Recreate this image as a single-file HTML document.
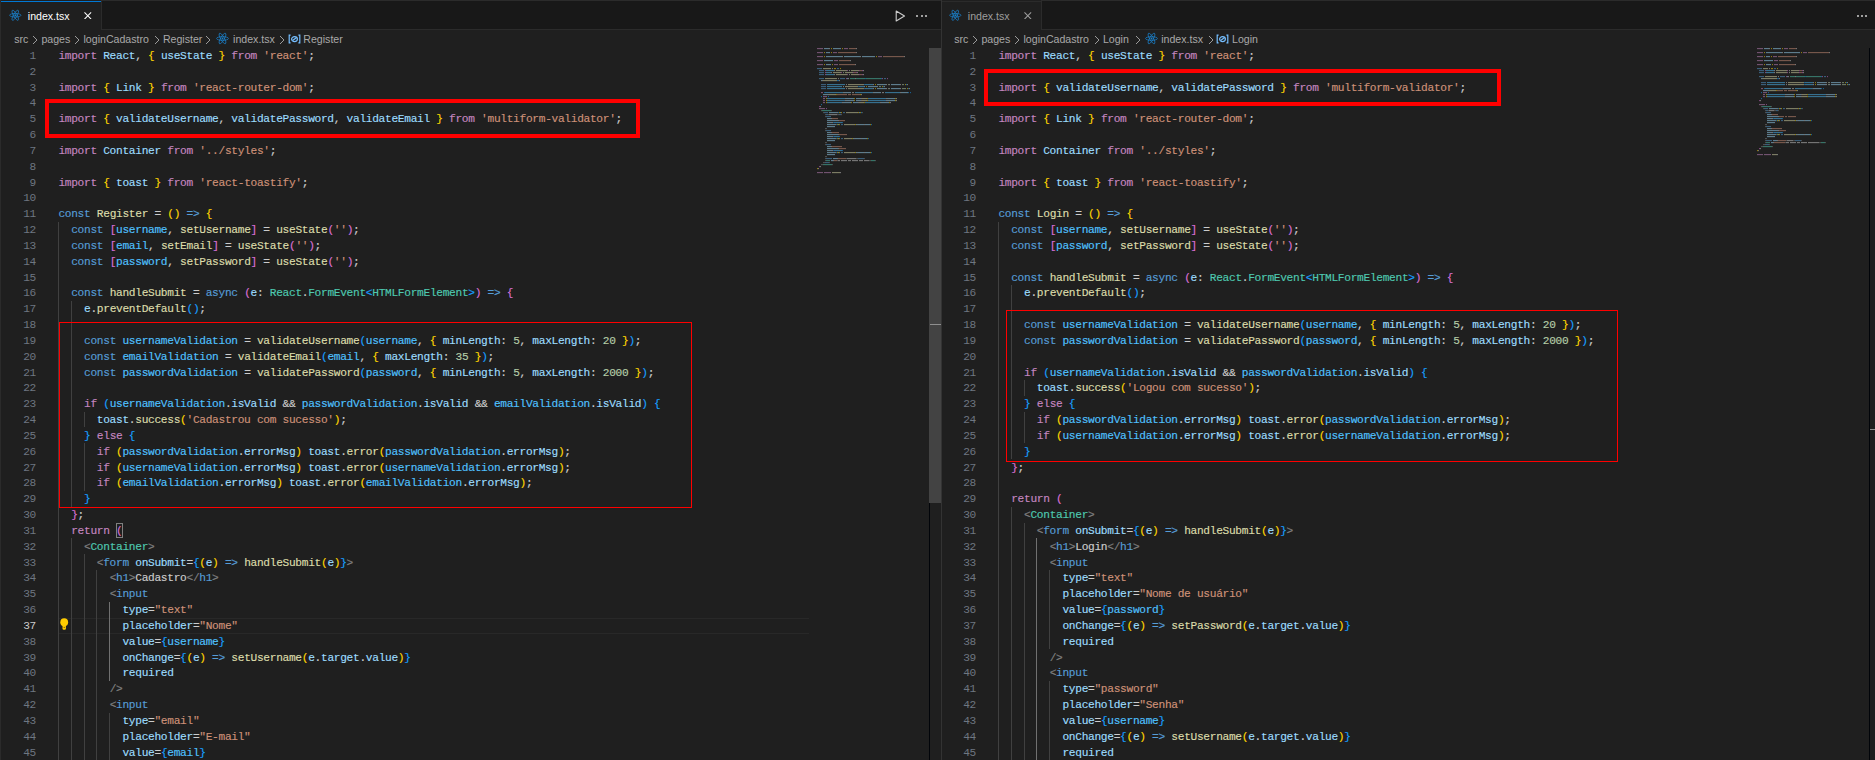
<!DOCTYPE html><html><head><meta charset="utf-8"><style>
*{margin:0;padding:0;box-sizing:border-box}
html,body{width:1875px;height:760px;overflow:hidden;background:#1f1f1f}
body{position:relative;font-family:"Liberation Sans",sans-serif}
.abs{position:absolute}
.tabs{position:absolute;top:0;height:30px;background:#181818;border-bottom:1px solid #2b2b2b}
.tab{position:absolute;top:0;height:30px;background:#1f1f1f;border-right:1px solid #2b2b2b}
.tabt{position:absolute;top:9.5px;font-size:10.6px;line-height:12px;white-space:pre}
.bc{position:absolute;top:33px;font-size:10.6px;line-height:12px;color:#a9a9a9;white-space:pre}
.chev{position:absolute;top:34.5px}
.ln{position:absolute;width:36px;text-align:right;font-family:"Liberation Mono",monospace;font-size:11.2px;letter-spacing:-0.31px;margin-top:1.4px;line-height:15.833px;height:15.833px;color:#6e7681}
.ln.act{color:#cccccc}
.cl{position:absolute;font-family:"Liberation Mono",monospace;font-size:11.2px;letter-spacing:-0.31px;line-height:15.833px;height:15.833px;color:#cccccc;white-space:pre;margin-top:1.4px;-webkit-text-stroke:0.15px currentColor}
.g{position:absolute;width:1px;background:#404040}
.g.ga{background:#707070}
.mm{position:absolute;opacity:0.62}
</style></head><body>
<div class="tabs" style="left:0;width:941px"></div>
<div class="tabs" style="left:942px;width:933px"></div>
<div class="abs" style="left:0;top:0;width:1875px;height:1px;background:#2b2b2b"></div>
<div class="abs" style="left:0;top:0;width:1px;height:760px;background:#2b2b2b"></div>
<div class="tab" style="left:1px;width:100.5px"></div>
<div class="abs" style="left:1px;top:1px;width:99.5px;height:1.2px;background:#0078d4"></div>
<svg width="12.5" height="12.5" viewBox="-12 -12 24 24" style="position:absolute;left:9.3px;top:9.3px"><g fill="none" stroke="#1a7fc9" stroke-width="1.4"><ellipse rx="11" ry="3.4"/><ellipse rx="11" ry="3.4" transform="rotate(60)"/><ellipse rx="11" ry="3.4" transform="rotate(120)"/></g><circle r="1.7" fill="#1a7fc9"/></svg>
<div class="tabt" style="left:27.8px;color:#ffffff">index.tsx</div>
<svg class="abs" style="left:84.3px;top:11.7px" width="7.6" height="7.6" viewBox="0 0 8 8"><path d="M.5.5l7 7M7.5.5l-7 7" stroke="#ffffff" stroke-width="1.1"/></svg>
<svg class="abs" style="left:895px;top:10px" width="11" height="12" viewBox="0 0 11 12"><path d="M1.2 1v10l8.3-5z" fill="none" stroke="#cccccc" stroke-width="1.1" stroke-linejoin="round"/></svg>
<div class="abs" style="left:916.4px;top:14.5px;width:2px;height:2px;background:#cccccc;border-radius:1px"></div>
<div class="abs" style="left:920.7px;top:14.5px;width:2px;height:2px;background:#cccccc;border-radius:1px"></div>
<div class="abs" style="left:924.8px;top:14.5px;width:2px;height:2px;background:#cccccc;border-radius:1px"></div>
<div class="tab" style="left:941px;width:100.5px"></div>
<div class="abs" style="left:942px;top:0.5px;width:98.5px;height:1.4px;background:#2b2b2b"></div>
<svg width="12.5" height="12.5" viewBox="-12 -12 24 24" style="position:absolute;left:949.3px;top:9.3px"><g fill="none" stroke="#1a7fc9" stroke-width="1.4"><ellipse rx="11" ry="3.4"/><ellipse rx="11" ry="3.4" transform="rotate(60)"/><ellipse rx="11" ry="3.4" transform="rotate(120)"/></g><circle r="1.7" fill="#1a7fc9"/></svg>
<div class="tabt" style="left:967.8px;color:#9d9d9d">index.tsx</div>
<svg class="abs" style="left:1024.3px;top:11.7px" width="7.6" height="7.6" viewBox="0 0 8 8"><path d="M.5.5l7 7M7.5.5l-7 7" stroke="#9d9d9d" stroke-width="1.1"/></svg>
<div class="abs" style="left:1856.8px;top:14.5px;width:2px;height:2px;background:#cccccc;border-radius:1px"></div>
<div class="abs" style="left:1860.8px;top:14.5px;width:2px;height:2px;background:#cccccc;border-radius:1px"></div>
<div class="abs" style="left:1864.9px;top:14.5px;width:2px;height:2px;background:#cccccc;border-radius:1px"></div>
<div class="abs" style="left:941px;top:0;width:1px;height:760px;background:#333333"></div>
<div class="bc" style="left:14.3px">src</div>
<svg class="chev" style="left:32.2px" width="6" height="10" viewBox="0 0 6 10"><path d="M1 1l4 4-4 4" fill="none" stroke="#a9a9a9" stroke-width="0.9"/></svg>
<div class="bc" style="left:41.4px">pages</div>
<svg class="chev" style="left:74.0px" width="6" height="10" viewBox="0 0 6 10"><path d="M1 1l4 4-4 4" fill="none" stroke="#a9a9a9" stroke-width="0.9"/></svg>
<div class="bc" style="left:83.5px">loginCadastro</div>
<svg class="chev" style="left:153.7px" width="6" height="10" viewBox="0 0 6 10"><path d="M1 1l4 4-4 4" fill="none" stroke="#a9a9a9" stroke-width="0.9"/></svg>
<div class="bc" style="left:162.9px">Register</div>
<svg class="chev" style="left:205.1px" width="6" height="10" viewBox="0 0 6 10"><path d="M1 1l4 4-4 4" fill="none" stroke="#a9a9a9" stroke-width="0.9"/></svg>
<svg width="13" height="13" viewBox="-12 -12 24 24" style="position:absolute;left:215.5px;top:32px"><g fill="none" stroke="#1a7fc9" stroke-width="1.4"><ellipse rx="11" ry="3.4"/><ellipse rx="11" ry="3.4" transform="rotate(60)"/><ellipse rx="11" ry="3.4" transform="rotate(120)"/></g><circle r="1.7" fill="#1a7fc9"/></svg>
<div class="bc" style="left:233.1px">index.tsx</div>
<svg class="chev" style="left:279.0px" width="6" height="10" viewBox="0 0 6 10"><path d="M1 1l4 4-4 4" fill="none" stroke="#a9a9a9" stroke-width="0.9"/></svg>
<svg width="13" height="10" viewBox="0 0 13 10" style="position:absolute;left:287.7px;top:34px"><g fill="none" stroke="#75beff" stroke-width="1.2"><path d="M2.6 1.2H1.2v7.6h1.4M10.4 1.2h1.4v7.6h-1.4"/><ellipse cx="6.5" cy="5.1" rx="2.9" ry="2.5"/><path d="M4.6 6.6L8.6 3.6"/></g></svg>
<div class="bc" style="left:303.3px">Register</div>
<div class="bc" style="left:954.3px">src</div>
<svg class="chev" style="left:972.2px" width="6" height="10" viewBox="0 0 6 10"><path d="M1 1l4 4-4 4" fill="none" stroke="#a9a9a9" stroke-width="0.9"/></svg>
<div class="bc" style="left:981.4px">pages</div>
<svg class="chev" style="left:1014.0px" width="6" height="10" viewBox="0 0 6 10"><path d="M1 1l4 4-4 4" fill="none" stroke="#a9a9a9" stroke-width="0.9"/></svg>
<div class="bc" style="left:1023.5px">loginCadastro</div>
<svg class="chev" style="left:1093.7px" width="6" height="10" viewBox="0 0 6 10"><path d="M1 1l4 4-4 4" fill="none" stroke="#a9a9a9" stroke-width="0.9"/></svg>
<div class="bc" style="left:1102.9px">Login</div>
<svg class="chev" style="left:1134.5px" width="6" height="10" viewBox="0 0 6 10"><path d="M1 1l4 4-4 4" fill="none" stroke="#a9a9a9" stroke-width="0.9"/></svg>
<svg width="13" height="13" viewBox="-12 -12 24 24" style="position:absolute;left:1144.6px;top:32px"><g fill="none" stroke="#1a7fc9" stroke-width="1.4"><ellipse rx="11" ry="3.4"/><ellipse rx="11" ry="3.4" transform="rotate(60)"/><ellipse rx="11" ry="3.4" transform="rotate(120)"/></g><circle r="1.7" fill="#1a7fc9"/></svg>
<div class="bc" style="left:1161.2px">index.tsx</div>
<svg class="chev" style="left:1207.5px" width="6" height="10" viewBox="0 0 6 10"><path d="M1 1l4 4-4 4" fill="none" stroke="#a9a9a9" stroke-width="0.9"/></svg>
<svg width="13" height="10" viewBox="0 0 13 10" style="position:absolute;left:1216.2px;top:34px"><g fill="none" stroke="#75beff" stroke-width="1.2"><path d="M2.6 1.2H1.2v7.6h1.4M10.4 1.2h1.4v7.6h-1.4"/><ellipse cx="6.5" cy="5.1" rx="2.9" ry="2.5"/><path d="M4.6 6.6L8.6 3.6"/></g></svg>
<div class="bc" style="left:1232.0px">Login</div>
<div class="abs" style="left:58px;top:617.50px;width:751px;height:16.8px;border-top:1px solid #282828;border-bottom:1px solid #282828"></div>
<div class="g" style="left:58px;top:221.67px;height:538.33px"></div>
<div class="g" style="left:71px;top:300.83px;height:205.83px"></div>
<div class="g" style="left:71px;top:538.33px;height:221.67px"></div>
<div class="g" style="left:84px;top:411.67px;height:15.83px"></div>
<div class="g" style="left:84px;top:443.33px;height:47.50px"></div>
<div class="g" style="left:84px;top:554.17px;height:205.83px"></div>
<div class="g" style="left:96px;top:570.00px;height:190.00px"></div>
<div class="g ga" style="left:109px;top:601.67px;height:79.17px"></div>
<div class="g" style="left:109px;top:712.50px;height:47.50px"></div>
<div class="ln" style="left:0px;top:47.50px">1</div>
<div class="cl" style="left:58.40px;top:47.50px"><span style="color:#c586c0">import</span> <span style="color:#9cdcfe">React</span><span style="color:#cccccc">,</span> <span style="color:#ffd700">{</span> <span style="color:#9cdcfe">useState</span> <span style="color:#ffd700">}</span> <span style="color:#c586c0">from</span> <span style="color:#ce9178">'react'</span><span style="color:#cccccc">;</span></div>
<div class="ln" style="left:0px;top:63.33px">2</div>
<div class="ln" style="left:0px;top:79.17px">3</div>
<div class="cl" style="left:58.40px;top:79.17px"><span style="color:#c586c0">import</span> <span style="color:#ffd700">{</span> <span style="color:#9cdcfe">Link</span> <span style="color:#ffd700">}</span> <span style="color:#c586c0">from</span> <span style="color:#ce9178">'react-router-dom'</span><span style="color:#cccccc">;</span></div>
<div class="ln" style="left:0px;top:95.00px">4</div>
<div class="ln" style="left:0px;top:110.83px">5</div>
<div class="cl" style="left:58.40px;top:110.83px"><span style="color:#c586c0">import</span> <span style="color:#ffd700">{</span> <span style="color:#9cdcfe">validateUsername</span><span style="color:#cccccc">,</span> <span style="color:#9cdcfe">validatePassword</span><span style="color:#cccccc">,</span> <span style="color:#9cdcfe">validateEmail</span> <span style="color:#ffd700">}</span> <span style="color:#c586c0">from</span> <span style="color:#ce9178">'multiform-validator'</span><span style="color:#cccccc">;</span></div>
<div class="ln" style="left:0px;top:126.67px">6</div>
<div class="ln" style="left:0px;top:142.50px">7</div>
<div class="cl" style="left:58.40px;top:142.50px"><span style="color:#c586c0">import</span> <span style="color:#9cdcfe">Container</span> <span style="color:#c586c0">from</span> <span style="color:#ce9178">'../styles'</span><span style="color:#cccccc">;</span></div>
<div class="ln" style="left:0px;top:158.33px">8</div>
<div class="ln" style="left:0px;top:174.17px">9</div>
<div class="cl" style="left:58.40px;top:174.17px"><span style="color:#c586c0">import</span> <span style="color:#ffd700">{</span> <span style="color:#9cdcfe">toast</span> <span style="color:#ffd700">}</span> <span style="color:#c586c0">from</span> <span style="color:#ce9178">'react-toastify'</span><span style="color:#cccccc">;</span></div>
<div class="ln" style="left:0px;top:190.00px">10</div>
<div class="ln" style="left:0px;top:205.83px">11</div>
<div class="cl" style="left:58.40px;top:205.83px"><span style="color:#569cd6">const</span> <span style="color:#dcdcaa">Register</span> <span style="color:#cccccc">=</span> <span style="color:#ffd700">(</span><span style="color:#ffd700">)</span> <span style="color:#569cd6">=&gt;</span> <span style="color:#ffd700">{</span></div>
<div class="ln" style="left:0px;top:221.67px">12</div>
<div class="cl" style="left:58.40px;top:221.67px">  <span style="color:#569cd6">const</span> <span style="color:#da70d6">[</span><span style="color:#4fc1ff">username</span><span style="color:#cccccc">,</span> <span style="color:#dcdcaa">setUsername</span><span style="color:#da70d6">]</span> <span style="color:#cccccc">=</span> <span style="color:#dcdcaa">useState</span><span style="color:#da70d6">(</span><span style="color:#ce9178">''</span><span style="color:#da70d6">)</span><span style="color:#cccccc">;</span></div>
<div class="ln" style="left:0px;top:237.50px">13</div>
<div class="cl" style="left:58.40px;top:237.50px">  <span style="color:#569cd6">const</span> <span style="color:#da70d6">[</span><span style="color:#4fc1ff">email</span><span style="color:#cccccc">,</span> <span style="color:#dcdcaa">setEmail</span><span style="color:#da70d6">]</span> <span style="color:#cccccc">=</span> <span style="color:#dcdcaa">useState</span><span style="color:#da70d6">(</span><span style="color:#ce9178">''</span><span style="color:#da70d6">)</span><span style="color:#cccccc">;</span></div>
<div class="ln" style="left:0px;top:253.33px">14</div>
<div class="cl" style="left:58.40px;top:253.33px">  <span style="color:#569cd6">const</span> <span style="color:#da70d6">[</span><span style="color:#4fc1ff">password</span><span style="color:#cccccc">,</span> <span style="color:#dcdcaa">setPassword</span><span style="color:#da70d6">]</span> <span style="color:#cccccc">=</span> <span style="color:#dcdcaa">useState</span><span style="color:#da70d6">(</span><span style="color:#ce9178">''</span><span style="color:#da70d6">)</span><span style="color:#cccccc">;</span></div>
<div class="ln" style="left:0px;top:269.17px">15</div>
<div class="ln" style="left:0px;top:285.00px">16</div>
<div class="cl" style="left:58.40px;top:285.00px">  <span style="color:#569cd6">const</span> <span style="color:#dcdcaa">handleSubmit</span> <span style="color:#cccccc">=</span> <span style="color:#569cd6">async</span> <span style="color:#da70d6">(</span><span style="color:#9cdcfe">e</span><span style="color:#cccccc">:</span> <span style="color:#4ec9b0">React</span><span style="color:#cccccc">.</span><span style="color:#4ec9b0">FormEvent</span><span style="color:#179fff">&lt;</span><span style="color:#4ec9b0">HTMLFormElement</span><span style="color:#179fff">&gt;</span><span style="color:#da70d6">)</span> <span style="color:#569cd6">=&gt;</span> <span style="color:#da70d6">{</span></div>
<div class="ln" style="left:0px;top:300.83px">17</div>
<div class="cl" style="left:58.40px;top:300.83px">    <span style="color:#9cdcfe">e</span><span style="color:#cccccc">.</span><span style="color:#dcdcaa">preventDefault</span><span style="color:#179fff">(</span><span style="color:#179fff">)</span><span style="color:#cccccc">;</span></div>
<div class="ln" style="left:0px;top:316.67px">18</div>
<div class="ln" style="left:0px;top:332.50px">19</div>
<div class="cl" style="left:58.40px;top:332.50px">    <span style="color:#569cd6">const</span> <span style="color:#4fc1ff">usernameValidation</span> <span style="color:#cccccc">=</span> <span style="color:#dcdcaa">validateUsername</span><span style="color:#179fff">(</span><span style="color:#4fc1ff">username</span><span style="color:#cccccc">,</span> <span style="color:#ffd700">{</span> <span style="color:#9cdcfe">minLength</span><span style="color:#cccccc">:</span> <span style="color:#b5cea8">5</span><span style="color:#cccccc">,</span> <span style="color:#9cdcfe">maxLength</span><span style="color:#cccccc">:</span> <span style="color:#b5cea8">20</span> <span style="color:#ffd700">}</span><span style="color:#179fff">)</span><span style="color:#cccccc">;</span></div>
<div class="ln" style="left:0px;top:348.33px">20</div>
<div class="cl" style="left:58.40px;top:348.33px">    <span style="color:#569cd6">const</span> <span style="color:#4fc1ff">emailValidation</span> <span style="color:#cccccc">=</span> <span style="color:#dcdcaa">validateEmail</span><span style="color:#179fff">(</span><span style="color:#4fc1ff">email</span><span style="color:#cccccc">,</span> <span style="color:#ffd700">{</span> <span style="color:#9cdcfe">maxLength</span><span style="color:#cccccc">:</span> <span style="color:#b5cea8">35</span> <span style="color:#ffd700">}</span><span style="color:#179fff">)</span><span style="color:#cccccc">;</span></div>
<div class="ln" style="left:0px;top:364.17px">21</div>
<div class="cl" style="left:58.40px;top:364.17px">    <span style="color:#569cd6">const</span> <span style="color:#4fc1ff">passwordValidation</span> <span style="color:#cccccc">=</span> <span style="color:#dcdcaa">validatePassword</span><span style="color:#179fff">(</span><span style="color:#4fc1ff">password</span><span style="color:#cccccc">,</span> <span style="color:#ffd700">{</span> <span style="color:#9cdcfe">minLength</span><span style="color:#cccccc">:</span> <span style="color:#b5cea8">5</span><span style="color:#cccccc">,</span> <span style="color:#9cdcfe">maxLength</span><span style="color:#cccccc">:</span> <span style="color:#b5cea8">2000</span> <span style="color:#ffd700">}</span><span style="color:#179fff">)</span><span style="color:#cccccc">;</span></div>
<div class="ln" style="left:0px;top:380.00px">22</div>
<div class="ln" style="left:0px;top:395.83px">23</div>
<div class="cl" style="left:58.40px;top:395.83px">    <span style="color:#c586c0">if</span> <span style="color:#179fff">(</span><span style="color:#4fc1ff">usernameValidation</span><span style="color:#cccccc">.</span><span style="color:#9cdcfe">isValid</span> <span style="color:#cccccc">&amp;</span><span style="color:#cccccc">&amp;</span> <span style="color:#4fc1ff">passwordValidation</span><span style="color:#cccccc">.</span><span style="color:#9cdcfe">isValid</span> <span style="color:#cccccc">&amp;</span><span style="color:#cccccc">&amp;</span> <span style="color:#4fc1ff">emailValidation</span><span style="color:#cccccc">.</span><span style="color:#9cdcfe">isValid</span><span style="color:#179fff">)</span> <span style="color:#179fff">{</span></div>
<div class="ln" style="left:0px;top:411.67px">24</div>
<div class="cl" style="left:58.40px;top:411.67px">      <span style="color:#9cdcfe">toast</span><span style="color:#cccccc">.</span><span style="color:#dcdcaa">success</span><span style="color:#ffd700">(</span><span style="color:#ce9178">'Cadastrou com sucesso'</span><span style="color:#ffd700">)</span><span style="color:#cccccc">;</span></div>
<div class="ln" style="left:0px;top:427.50px">25</div>
<div class="cl" style="left:58.40px;top:427.50px">    <span style="color:#179fff">}</span> <span style="color:#c586c0">else</span> <span style="color:#179fff">{</span></div>
<div class="ln" style="left:0px;top:443.33px">26</div>
<div class="cl" style="left:58.40px;top:443.33px">      <span style="color:#c586c0">if</span> <span style="color:#ffd700">(</span><span style="color:#4fc1ff">passwordValidation</span><span style="color:#cccccc">.</span><span style="color:#9cdcfe">errorMsg</span><span style="color:#ffd700">)</span> <span style="color:#9cdcfe">toast</span><span style="color:#cccccc">.</span><span style="color:#dcdcaa">error</span><span style="color:#ffd700">(</span><span style="color:#4fc1ff">passwordValidation</span><span style="color:#cccccc">.</span><span style="color:#9cdcfe">errorMsg</span><span style="color:#ffd700">)</span><span style="color:#cccccc">;</span></div>
<div class="ln" style="left:0px;top:459.17px">27</div>
<div class="cl" style="left:58.40px;top:459.17px">      <span style="color:#c586c0">if</span> <span style="color:#ffd700">(</span><span style="color:#4fc1ff">usernameValidation</span><span style="color:#cccccc">.</span><span style="color:#9cdcfe">errorMsg</span><span style="color:#ffd700">)</span> <span style="color:#9cdcfe">toast</span><span style="color:#cccccc">.</span><span style="color:#dcdcaa">error</span><span style="color:#ffd700">(</span><span style="color:#4fc1ff">usernameValidation</span><span style="color:#cccccc">.</span><span style="color:#9cdcfe">errorMsg</span><span style="color:#ffd700">)</span><span style="color:#cccccc">;</span></div>
<div class="ln" style="left:0px;top:475.00px">28</div>
<div class="cl" style="left:58.40px;top:475.00px">      <span style="color:#c586c0">if</span> <span style="color:#ffd700">(</span><span style="color:#4fc1ff">emailValidation</span><span style="color:#cccccc">.</span><span style="color:#9cdcfe">errorMsg</span><span style="color:#ffd700">)</span> <span style="color:#9cdcfe">toast</span><span style="color:#cccccc">.</span><span style="color:#dcdcaa">error</span><span style="color:#ffd700">(</span><span style="color:#4fc1ff">emailValidation</span><span style="color:#cccccc">.</span><span style="color:#9cdcfe">errorMsg</span><span style="color:#ffd700">)</span><span style="color:#cccccc">;</span></div>
<div class="ln" style="left:0px;top:490.83px">29</div>
<div class="cl" style="left:58.40px;top:490.83px">    <span style="color:#179fff">}</span></div>
<div class="ln" style="left:0px;top:506.67px">30</div>
<div class="cl" style="left:58.40px;top:506.67px">  <span style="color:#da70d6">}</span><span style="color:#cccccc">;</span></div>
<div class="ln" style="left:0px;top:522.50px">31</div>
<div class="cl" style="left:58.40px;top:522.50px">  <span style="color:#c586c0">return</span> <span style="color:#da70d6">(</span></div>
<div class="ln" style="left:0px;top:538.33px">32</div>
<div class="cl" style="left:58.40px;top:538.33px">    <span style="color:#808080">&lt;</span><span style="color:#4ec9b0">Container</span><span style="color:#808080">&gt;</span></div>
<div class="ln" style="left:0px;top:554.17px">33</div>
<div class="cl" style="left:58.40px;top:554.17px">      <span style="color:#808080">&lt;</span><span style="color:#569cd6">form</span> <span style="color:#9cdcfe">onSubmit</span><span style="color:#cccccc">=</span><span style="color:#179fff">{</span><span style="color:#ffd700">(</span><span style="color:#9cdcfe">e</span><span style="color:#ffd700">)</span> <span style="color:#569cd6">=&gt;</span> <span style="color:#dcdcaa">handleSubmit</span><span style="color:#ffd700">(</span><span style="color:#9cdcfe">e</span><span style="color:#ffd700">)</span><span style="color:#179fff">}</span><span style="color:#808080">&gt;</span></div>
<div class="ln" style="left:0px;top:570.00px">34</div>
<div class="cl" style="left:58.40px;top:570.00px">        <span style="color:#808080">&lt;</span><span style="color:#569cd6">h1</span><span style="color:#808080">&gt;</span><span style="color:#cccccc">Cadastro</span><span style="color:#808080">&lt;/</span><span style="color:#569cd6">h1</span><span style="color:#808080">&gt;</span></div>
<div class="ln" style="left:0px;top:585.83px">35</div>
<div class="cl" style="left:58.40px;top:585.83px">        <span style="color:#808080">&lt;</span><span style="color:#569cd6">input</span></div>
<div class="ln" style="left:0px;top:601.67px">36</div>
<div class="cl" style="left:58.40px;top:601.67px">          <span style="color:#9cdcfe">type</span><span style="color:#cccccc">=</span><span style="color:#ce9178">"text"</span></div>
<div class="ln act" style="left:0px;top:617.50px">37</div>
<div class="cl" style="left:58.40px;top:617.50px">          <span style="color:#9cdcfe">placeholder</span><span style="color:#cccccc">=</span><span style="color:#ce9178">"Nome"</span></div>
<div class="ln" style="left:0px;top:633.33px">38</div>
<div class="cl" style="left:58.40px;top:633.33px">          <span style="color:#9cdcfe">value</span><span style="color:#cccccc">=</span><span style="color:#179fff">{</span><span style="color:#4fc1ff">username</span><span style="color:#179fff">}</span></div>
<div class="ln" style="left:0px;top:649.17px">39</div>
<div class="cl" style="left:58.40px;top:649.17px">          <span style="color:#9cdcfe">onChange</span><span style="color:#cccccc">=</span><span style="color:#179fff">{</span><span style="color:#ffd700">(</span><span style="color:#9cdcfe">e</span><span style="color:#ffd700">)</span> <span style="color:#569cd6">=&gt;</span> <span style="color:#dcdcaa">setUsername</span><span style="color:#ffd700">(</span><span style="color:#9cdcfe">e</span><span style="color:#cccccc">.</span><span style="color:#9cdcfe">target</span><span style="color:#cccccc">.</span><span style="color:#9cdcfe">value</span><span style="color:#ffd700">)</span><span style="color:#179fff">}</span></div>
<div class="ln" style="left:0px;top:665.00px">40</div>
<div class="cl" style="left:58.40px;top:665.00px">          <span style="color:#9cdcfe">required</span></div>
<div class="ln" style="left:0px;top:680.83px">41</div>
<div class="cl" style="left:58.40px;top:680.83px">        <span style="color:#808080">/&gt;</span></div>
<div class="ln" style="left:0px;top:696.67px">42</div>
<div class="cl" style="left:58.40px;top:696.67px">        <span style="color:#808080">&lt;</span><span style="color:#569cd6">input</span></div>
<div class="ln" style="left:0px;top:712.50px">43</div>
<div class="cl" style="left:58.40px;top:712.50px">          <span style="color:#9cdcfe">type</span><span style="color:#cccccc">=</span><span style="color:#ce9178">"email"</span></div>
<div class="ln" style="left:0px;top:728.33px">44</div>
<div class="cl" style="left:58.40px;top:728.33px">          <span style="color:#9cdcfe">placeholder</span><span style="color:#cccccc">=</span><span style="color:#ce9178">"E-mail"</span></div>
<div class="ln" style="left:0px;top:744.17px">45</div>
<div class="cl" style="left:58.40px;top:744.17px">          <span style="color:#9cdcfe">value</span><span style="color:#cccccc">=</span><span style="color:#179fff">{</span><span style="color:#4fc1ff">email</span><span style="color:#179fff">}</span></div>
<div class="g" style="left:998px;top:221.67px;height:538.33px"></div>
<div class="g" style="left:1011px;top:285.00px;height:174.17px"></div>
<div class="g" style="left:1011px;top:506.67px;height:253.33px"></div>
<div class="g" style="left:1024px;top:380.00px;height:15.83px"></div>
<div class="g" style="left:1024px;top:411.67px;height:31.67px"></div>
<div class="g" style="left:1024px;top:522.50px;height:237.50px"></div>
<div class="g ga" style="left:1036px;top:538.33px;height:221.67px"></div>
<div class="g" style="left:1049px;top:570.00px;height:79.17px"></div>
<div class="g" style="left:1049px;top:680.83px;height:79.17px"></div>
<div class="ln" style="left:940px;top:47.50px">1</div>
<div class="cl" style="left:998.40px;top:47.50px"><span style="color:#c586c0">import</span> <span style="color:#9cdcfe">React</span><span style="color:#cccccc">,</span> <span style="color:#ffd700">{</span> <span style="color:#9cdcfe">useState</span> <span style="color:#ffd700">}</span> <span style="color:#c586c0">from</span> <span style="color:#ce9178">'react'</span><span style="color:#cccccc">;</span></div>
<div class="ln" style="left:940px;top:63.33px">2</div>
<div class="ln" style="left:940px;top:79.17px">3</div>
<div class="cl" style="left:998.40px;top:79.17px"><span style="color:#c586c0">import</span> <span style="color:#ffd700">{</span> <span style="color:#9cdcfe">validateUsername</span><span style="color:#cccccc">,</span> <span style="color:#9cdcfe">validatePassword</span> <span style="color:#ffd700">}</span> <span style="color:#c586c0">from</span> <span style="color:#ce9178">'multiform-validator'</span><span style="color:#cccccc">;</span></div>
<div class="ln" style="left:940px;top:95.00px">4</div>
<div class="ln" style="left:940px;top:110.83px">5</div>
<div class="cl" style="left:998.40px;top:110.83px"><span style="color:#c586c0">import</span> <span style="color:#ffd700">{</span> <span style="color:#9cdcfe">Link</span> <span style="color:#ffd700">}</span> <span style="color:#c586c0">from</span> <span style="color:#ce9178">'react-router-dom'</span><span style="color:#cccccc">;</span></div>
<div class="ln" style="left:940px;top:126.67px">6</div>
<div class="ln" style="left:940px;top:142.50px">7</div>
<div class="cl" style="left:998.40px;top:142.50px"><span style="color:#c586c0">import</span> <span style="color:#9cdcfe">Container</span> <span style="color:#c586c0">from</span> <span style="color:#ce9178">'../styles'</span><span style="color:#cccccc">;</span></div>
<div class="ln" style="left:940px;top:158.33px">8</div>
<div class="ln" style="left:940px;top:174.17px">9</div>
<div class="cl" style="left:998.40px;top:174.17px"><span style="color:#c586c0">import</span> <span style="color:#ffd700">{</span> <span style="color:#9cdcfe">toast</span> <span style="color:#ffd700">}</span> <span style="color:#c586c0">from</span> <span style="color:#ce9178">'react-toastify'</span><span style="color:#cccccc">;</span></div>
<div class="ln" style="left:940px;top:190.00px">10</div>
<div class="ln" style="left:940px;top:205.83px">11</div>
<div class="cl" style="left:998.40px;top:205.83px"><span style="color:#569cd6">const</span> <span style="color:#dcdcaa">Login</span> <span style="color:#cccccc">=</span> <span style="color:#ffd700">(</span><span style="color:#ffd700">)</span> <span style="color:#569cd6">=&gt;</span> <span style="color:#ffd700">{</span></div>
<div class="ln" style="left:940px;top:221.67px">12</div>
<div class="cl" style="left:998.40px;top:221.67px">  <span style="color:#569cd6">const</span> <span style="color:#da70d6">[</span><span style="color:#4fc1ff">username</span><span style="color:#cccccc">,</span> <span style="color:#dcdcaa">setUsername</span><span style="color:#da70d6">]</span> <span style="color:#cccccc">=</span> <span style="color:#dcdcaa">useState</span><span style="color:#da70d6">(</span><span style="color:#ce9178">''</span><span style="color:#da70d6">)</span><span style="color:#cccccc">;</span></div>
<div class="ln" style="left:940px;top:237.50px">13</div>
<div class="cl" style="left:998.40px;top:237.50px">  <span style="color:#569cd6">const</span> <span style="color:#da70d6">[</span><span style="color:#4fc1ff">password</span><span style="color:#cccccc">,</span> <span style="color:#dcdcaa">setPassword</span><span style="color:#da70d6">]</span> <span style="color:#cccccc">=</span> <span style="color:#dcdcaa">useState</span><span style="color:#da70d6">(</span><span style="color:#ce9178">''</span><span style="color:#da70d6">)</span><span style="color:#cccccc">;</span></div>
<div class="ln" style="left:940px;top:253.33px">14</div>
<div class="ln" style="left:940px;top:269.17px">15</div>
<div class="cl" style="left:998.40px;top:269.17px">  <span style="color:#569cd6">const</span> <span style="color:#dcdcaa">handleSubmit</span> <span style="color:#cccccc">=</span> <span style="color:#569cd6">async</span> <span style="color:#da70d6">(</span><span style="color:#9cdcfe">e</span><span style="color:#cccccc">:</span> <span style="color:#4ec9b0">React</span><span style="color:#cccccc">.</span><span style="color:#4ec9b0">FormEvent</span><span style="color:#179fff">&lt;</span><span style="color:#4ec9b0">HTMLFormElement</span><span style="color:#179fff">&gt;</span><span style="color:#da70d6">)</span> <span style="color:#569cd6">=&gt;</span> <span style="color:#da70d6">{</span></div>
<div class="ln" style="left:940px;top:285.00px">16</div>
<div class="cl" style="left:998.40px;top:285.00px">    <span style="color:#9cdcfe">e</span><span style="color:#cccccc">.</span><span style="color:#dcdcaa">preventDefault</span><span style="color:#179fff">(</span><span style="color:#179fff">)</span><span style="color:#cccccc">;</span></div>
<div class="ln" style="left:940px;top:300.83px">17</div>
<div class="ln" style="left:940px;top:316.67px">18</div>
<div class="cl" style="left:998.40px;top:316.67px">    <span style="color:#569cd6">const</span> <span style="color:#4fc1ff">usernameValidation</span> <span style="color:#cccccc">=</span> <span style="color:#dcdcaa">validateUsername</span><span style="color:#179fff">(</span><span style="color:#4fc1ff">username</span><span style="color:#cccccc">,</span> <span style="color:#ffd700">{</span> <span style="color:#9cdcfe">minLength</span><span style="color:#cccccc">:</span> <span style="color:#b5cea8">5</span><span style="color:#cccccc">,</span> <span style="color:#9cdcfe">maxLength</span><span style="color:#cccccc">:</span> <span style="color:#b5cea8">20</span> <span style="color:#ffd700">}</span><span style="color:#179fff">)</span><span style="color:#cccccc">;</span></div>
<div class="ln" style="left:940px;top:332.50px">19</div>
<div class="cl" style="left:998.40px;top:332.50px">    <span style="color:#569cd6">const</span> <span style="color:#4fc1ff">passwordValidation</span> <span style="color:#cccccc">=</span> <span style="color:#dcdcaa">validatePassword</span><span style="color:#179fff">(</span><span style="color:#4fc1ff">password</span><span style="color:#cccccc">,</span> <span style="color:#ffd700">{</span> <span style="color:#9cdcfe">minLength</span><span style="color:#cccccc">:</span> <span style="color:#b5cea8">5</span><span style="color:#cccccc">,</span> <span style="color:#9cdcfe">maxLength</span><span style="color:#cccccc">:</span> <span style="color:#b5cea8">2000</span> <span style="color:#ffd700">}</span><span style="color:#179fff">)</span><span style="color:#cccccc">;</span></div>
<div class="ln" style="left:940px;top:348.33px">20</div>
<div class="ln" style="left:940px;top:364.17px">21</div>
<div class="cl" style="left:998.40px;top:364.17px">    <span style="color:#c586c0">if</span> <span style="color:#179fff">(</span><span style="color:#4fc1ff">usernameValidation</span><span style="color:#cccccc">.</span><span style="color:#9cdcfe">isValid</span> <span style="color:#cccccc">&amp;</span><span style="color:#cccccc">&amp;</span> <span style="color:#4fc1ff">passwordValidation</span><span style="color:#cccccc">.</span><span style="color:#9cdcfe">isValid</span><span style="color:#179fff">)</span> <span style="color:#179fff">{</span></div>
<div class="ln" style="left:940px;top:380.00px">22</div>
<div class="cl" style="left:998.40px;top:380.00px">      <span style="color:#9cdcfe">toast</span><span style="color:#cccccc">.</span><span style="color:#dcdcaa">success</span><span style="color:#ffd700">(</span><span style="color:#ce9178">'Logou com sucesso'</span><span style="color:#ffd700">)</span><span style="color:#cccccc">;</span></div>
<div class="ln" style="left:940px;top:395.83px">23</div>
<div class="cl" style="left:998.40px;top:395.83px">    <span style="color:#179fff">}</span> <span style="color:#c586c0">else</span> <span style="color:#179fff">{</span></div>
<div class="ln" style="left:940px;top:411.67px">24</div>
<div class="cl" style="left:998.40px;top:411.67px">      <span style="color:#c586c0">if</span> <span style="color:#ffd700">(</span><span style="color:#4fc1ff">passwordValidation</span><span style="color:#cccccc">.</span><span style="color:#9cdcfe">errorMsg</span><span style="color:#ffd700">)</span> <span style="color:#9cdcfe">toast</span><span style="color:#cccccc">.</span><span style="color:#dcdcaa">error</span><span style="color:#ffd700">(</span><span style="color:#4fc1ff">passwordValidation</span><span style="color:#cccccc">.</span><span style="color:#9cdcfe">errorMsg</span><span style="color:#ffd700">)</span><span style="color:#cccccc">;</span></div>
<div class="ln" style="left:940px;top:427.50px">25</div>
<div class="cl" style="left:998.40px;top:427.50px">      <span style="color:#c586c0">if</span> <span style="color:#ffd700">(</span><span style="color:#4fc1ff">usernameValidation</span><span style="color:#cccccc">.</span><span style="color:#9cdcfe">errorMsg</span><span style="color:#ffd700">)</span> <span style="color:#9cdcfe">toast</span><span style="color:#cccccc">.</span><span style="color:#dcdcaa">error</span><span style="color:#ffd700">(</span><span style="color:#4fc1ff">usernameValidation</span><span style="color:#cccccc">.</span><span style="color:#9cdcfe">errorMsg</span><span style="color:#ffd700">)</span><span style="color:#cccccc">;</span></div>
<div class="ln" style="left:940px;top:443.33px">26</div>
<div class="cl" style="left:998.40px;top:443.33px">    <span style="color:#179fff">}</span></div>
<div class="ln" style="left:940px;top:459.17px">27</div>
<div class="cl" style="left:998.40px;top:459.17px">  <span style="color:#da70d6">}</span><span style="color:#cccccc">;</span></div>
<div class="ln" style="left:940px;top:475.00px">28</div>
<div class="ln" style="left:940px;top:490.83px">29</div>
<div class="cl" style="left:998.40px;top:490.83px">  <span style="color:#c586c0">return</span> <span style="color:#da70d6">(</span></div>
<div class="ln" style="left:940px;top:506.67px">30</div>
<div class="cl" style="left:998.40px;top:506.67px">    <span style="color:#808080">&lt;</span><span style="color:#4ec9b0">Container</span><span style="color:#808080">&gt;</span></div>
<div class="ln" style="left:940px;top:522.50px">31</div>
<div class="cl" style="left:998.40px;top:522.50px">      <span style="color:#808080">&lt;</span><span style="color:#569cd6">form</span> <span style="color:#9cdcfe">onSubmit</span><span style="color:#cccccc">=</span><span style="color:#179fff">{</span><span style="color:#ffd700">(</span><span style="color:#9cdcfe">e</span><span style="color:#ffd700">)</span> <span style="color:#569cd6">=&gt;</span> <span style="color:#dcdcaa">handleSubmit</span><span style="color:#ffd700">(</span><span style="color:#9cdcfe">e</span><span style="color:#ffd700">)</span><span style="color:#179fff">}</span><span style="color:#808080">&gt;</span></div>
<div class="ln" style="left:940px;top:538.33px">32</div>
<div class="cl" style="left:998.40px;top:538.33px">        <span style="color:#808080">&lt;</span><span style="color:#569cd6">h1</span><span style="color:#808080">&gt;</span><span style="color:#cccccc">Login</span><span style="color:#808080">&lt;/</span><span style="color:#569cd6">h1</span><span style="color:#808080">&gt;</span></div>
<div class="ln" style="left:940px;top:554.17px">33</div>
<div class="cl" style="left:998.40px;top:554.17px">        <span style="color:#808080">&lt;</span><span style="color:#569cd6">input</span></div>
<div class="ln" style="left:940px;top:570.00px">34</div>
<div class="cl" style="left:998.40px;top:570.00px">          <span style="color:#9cdcfe">type</span><span style="color:#cccccc">=</span><span style="color:#ce9178">"text"</span></div>
<div class="ln" style="left:940px;top:585.83px">35</div>
<div class="cl" style="left:998.40px;top:585.83px">          <span style="color:#9cdcfe">placeholder</span><span style="color:#cccccc">=</span><span style="color:#ce9178">"Nome de usuário"</span></div>
<div class="ln" style="left:940px;top:601.67px">36</div>
<div class="cl" style="left:998.40px;top:601.67px">          <span style="color:#9cdcfe">value</span><span style="color:#cccccc">=</span><span style="color:#179fff">{</span><span style="color:#4fc1ff">password</span><span style="color:#179fff">}</span></div>
<div class="ln" style="left:940px;top:617.50px">37</div>
<div class="cl" style="left:998.40px;top:617.50px">          <span style="color:#9cdcfe">onChange</span><span style="color:#cccccc">=</span><span style="color:#179fff">{</span><span style="color:#ffd700">(</span><span style="color:#9cdcfe">e</span><span style="color:#ffd700">)</span> <span style="color:#569cd6">=&gt;</span> <span style="color:#dcdcaa">setPassword</span><span style="color:#ffd700">(</span><span style="color:#9cdcfe">e</span><span style="color:#cccccc">.</span><span style="color:#9cdcfe">target</span><span style="color:#cccccc">.</span><span style="color:#9cdcfe">value</span><span style="color:#ffd700">)</span><span style="color:#179fff">}</span></div>
<div class="ln" style="left:940px;top:633.33px">38</div>
<div class="cl" style="left:998.40px;top:633.33px">          <span style="color:#9cdcfe">required</span></div>
<div class="ln" style="left:940px;top:649.17px">39</div>
<div class="cl" style="left:998.40px;top:649.17px">        <span style="color:#808080">/&gt;</span></div>
<div class="ln" style="left:940px;top:665.00px">40</div>
<div class="cl" style="left:998.40px;top:665.00px">        <span style="color:#808080">&lt;</span><span style="color:#569cd6">input</span></div>
<div class="ln" style="left:940px;top:680.83px">41</div>
<div class="cl" style="left:998.40px;top:680.83px">          <span style="color:#9cdcfe">type</span><span style="color:#cccccc">=</span><span style="color:#ce9178">"password"</span></div>
<div class="ln" style="left:940px;top:696.67px">42</div>
<div class="cl" style="left:998.40px;top:696.67px">          <span style="color:#9cdcfe">placeholder</span><span style="color:#cccccc">=</span><span style="color:#ce9178">"Senha"</span></div>
<div class="ln" style="left:940px;top:712.50px">43</div>
<div class="cl" style="left:998.40px;top:712.50px">          <span style="color:#9cdcfe">value</span><span style="color:#cccccc">=</span><span style="color:#179fff">{</span><span style="color:#4fc1ff">username</span><span style="color:#179fff">}</span></div>
<div class="ln" style="left:940px;top:728.33px">44</div>
<div class="cl" style="left:998.40px;top:728.33px">          <span style="color:#9cdcfe">onChange</span><span style="color:#cccccc">=</span><span style="color:#179fff">{</span><span style="color:#ffd700">(</span><span style="color:#9cdcfe">e</span><span style="color:#ffd700">)</span> <span style="color:#569cd6">=&gt;</span> <span style="color:#dcdcaa">setUsername</span><span style="color:#ffd700">(</span><span style="color:#9cdcfe">e</span><span style="color:#cccccc">.</span><span style="color:#9cdcfe">target</span><span style="color:#cccccc">.</span><span style="color:#9cdcfe">value</span><span style="color:#ffd700">)</span><span style="color:#179fff">}</span></div>
<div class="ln" style="left:940px;top:744.17px">45</div>
<div class="cl" style="left:998.40px;top:744.17px">          <span style="color:#9cdcfe">required</span></div>
<svg class="abs" style="left:60.3px;top:618.2px" width="9" height="13" viewBox="0 0 9 13"><circle cx="4.2" cy="4.2" r="3.9" fill="#ffcc00"/><rect x="2.5" y="6.5" width="3.4" height="5.3" rx="1.2" fill="#ffcc00"/><circle cx="4.2" cy="9.4" r="0.6" fill="#7a5a00"/></svg>
<div class="abs" style="left:115.59px;top:522.50px;width:7.41px;height:15.83px;border:1px solid #808080"></div>
<svg class="mm" style="left:817px;top:47.5px" width="120" height="126" viewBox="0 0 120 126"><defs><pattern id="pmm817" width="1" height="2" patternUnits="userSpaceOnUse"><rect x="0" y="0" width="0.8" height="1.6" fill="#fff"/></pattern><mask id="kmm817"><rect width="120" height="126" fill="url(#pmm817)"/></mask></defs><g mask="url(#kmm817)"><rect x="0" y="0" width="6" height="1.25" fill="#c586c0"/><rect x="7" y="0" width="5" height="1.25" fill="#9cdcfe"/><rect x="12" y="0" width="1" height="1.25" fill="#cccccc"/><rect x="14" y="0" width="1" height="1.25" fill="#ffd700"/><rect x="16" y="0" width="8" height="1.25" fill="#9cdcfe"/><rect x="25" y="0" width="1" height="1.25" fill="#ffd700"/><rect x="27" y="0" width="4" height="1.25" fill="#c586c0"/><rect x="32" y="0" width="7" height="1.25" fill="#ce9178"/><rect x="39" y="0" width="1" height="1.25" fill="#cccccc"/><rect x="0" y="4" width="6" height="1.25" fill="#c586c0"/><rect x="7" y="4" width="1" height="1.25" fill="#ffd700"/><rect x="9" y="4" width="4" height="1.25" fill="#9cdcfe"/><rect x="14" y="4" width="1" height="1.25" fill="#ffd700"/><rect x="16" y="4" width="4" height="1.25" fill="#c586c0"/><rect x="21" y="4" width="18" height="1.25" fill="#ce9178"/><rect x="39" y="4" width="1" height="1.25" fill="#cccccc"/><rect x="0" y="8" width="6" height="1.25" fill="#c586c0"/><rect x="7" y="8" width="1" height="1.25" fill="#ffd700"/><rect x="9" y="8" width="16" height="1.25" fill="#9cdcfe"/><rect x="25" y="8" width="1" height="1.25" fill="#cccccc"/><rect x="27" y="8" width="16" height="1.25" fill="#9cdcfe"/><rect x="43" y="8" width="1" height="1.25" fill="#cccccc"/><rect x="45" y="8" width="13" height="1.25" fill="#9cdcfe"/><rect x="59" y="8" width="1" height="1.25" fill="#ffd700"/><rect x="61" y="8" width="4" height="1.25" fill="#c586c0"/><rect x="66" y="8" width="21" height="1.25" fill="#ce9178"/><rect x="87" y="8" width="1" height="1.25" fill="#cccccc"/><rect x="0" y="12" width="6" height="1.25" fill="#c586c0"/><rect x="7" y="12" width="9" height="1.25" fill="#9cdcfe"/><rect x="17" y="12" width="4" height="1.25" fill="#c586c0"/><rect x="22" y="12" width="11" height="1.25" fill="#ce9178"/><rect x="33" y="12" width="1" height="1.25" fill="#cccccc"/><rect x="0" y="16" width="6" height="1.25" fill="#c586c0"/><rect x="7" y="16" width="1" height="1.25" fill="#ffd700"/><rect x="9" y="16" width="5" height="1.25" fill="#9cdcfe"/><rect x="15" y="16" width="1" height="1.25" fill="#ffd700"/><rect x="17" y="16" width="4" height="1.25" fill="#c586c0"/><rect x="22" y="16" width="16" height="1.25" fill="#ce9178"/><rect x="38" y="16" width="1" height="1.25" fill="#cccccc"/><rect x="0" y="20" width="5" height="1.25" fill="#569cd6"/><rect x="6" y="20" width="8" height="1.25" fill="#dcdcaa"/><rect x="15" y="20" width="1" height="1.25" fill="#cccccc"/><rect x="17" y="20" width="1" height="1.25" fill="#ffd700"/><rect x="18" y="20" width="1" height="1.25" fill="#ffd700"/><rect x="20" y="20" width="2" height="1.25" fill="#569cd6"/><rect x="23" y="20" width="1" height="1.25" fill="#ffd700"/><rect x="2" y="22" width="5" height="1.25" fill="#569cd6"/><rect x="8" y="22" width="1" height="1.25" fill="#da70d6"/><rect x="9" y="22" width="8" height="1.25" fill="#4fc1ff"/><rect x="17" y="22" width="1" height="1.25" fill="#cccccc"/><rect x="19" y="22" width="11" height="1.25" fill="#dcdcaa"/><rect x="30" y="22" width="1" height="1.25" fill="#da70d6"/><rect x="32" y="22" width="1" height="1.25" fill="#cccccc"/><rect x="34" y="22" width="8" height="1.25" fill="#dcdcaa"/><rect x="42" y="22" width="1" height="1.25" fill="#da70d6"/><rect x="43" y="22" width="2" height="1.25" fill="#ce9178"/><rect x="45" y="22" width="1" height="1.25" fill="#da70d6"/><rect x="46" y="22" width="1" height="1.25" fill="#cccccc"/><rect x="2" y="24" width="5" height="1.25" fill="#569cd6"/><rect x="8" y="24" width="1" height="1.25" fill="#da70d6"/><rect x="9" y="24" width="5" height="1.25" fill="#4fc1ff"/><rect x="14" y="24" width="1" height="1.25" fill="#cccccc"/><rect x="16" y="24" width="8" height="1.25" fill="#dcdcaa"/><rect x="24" y="24" width="1" height="1.25" fill="#da70d6"/><rect x="26" y="24" width="1" height="1.25" fill="#cccccc"/><rect x="28" y="24" width="8" height="1.25" fill="#dcdcaa"/><rect x="36" y="24" width="1" height="1.25" fill="#da70d6"/><rect x="37" y="24" width="2" height="1.25" fill="#ce9178"/><rect x="39" y="24" width="1" height="1.25" fill="#da70d6"/><rect x="40" y="24" width="1" height="1.25" fill="#cccccc"/><rect x="2" y="26" width="5" height="1.25" fill="#569cd6"/><rect x="8" y="26" width="1" height="1.25" fill="#da70d6"/><rect x="9" y="26" width="8" height="1.25" fill="#4fc1ff"/><rect x="17" y="26" width="1" height="1.25" fill="#cccccc"/><rect x="19" y="26" width="11" height="1.25" fill="#dcdcaa"/><rect x="30" y="26" width="1" height="1.25" fill="#da70d6"/><rect x="32" y="26" width="1" height="1.25" fill="#cccccc"/><rect x="34" y="26" width="8" height="1.25" fill="#dcdcaa"/><rect x="42" y="26" width="1" height="1.25" fill="#da70d6"/><rect x="43" y="26" width="2" height="1.25" fill="#ce9178"/><rect x="45" y="26" width="1" height="1.25" fill="#da70d6"/><rect x="46" y="26" width="1" height="1.25" fill="#cccccc"/><rect x="2" y="30" width="5" height="1.25" fill="#569cd6"/><rect x="8" y="30" width="12" height="1.25" fill="#dcdcaa"/><rect x="21" y="30" width="1" height="1.25" fill="#cccccc"/><rect x="23" y="30" width="5" height="1.25" fill="#569cd6"/><rect x="29" y="30" width="1" height="1.25" fill="#da70d6"/><rect x="30" y="30" width="1" height="1.25" fill="#9cdcfe"/><rect x="31" y="30" width="1" height="1.25" fill="#cccccc"/><rect x="33" y="30" width="5" height="1.25" fill="#4ec9b0"/><rect x="38" y="30" width="1" height="1.25" fill="#cccccc"/><rect x="39" y="30" width="9" height="1.25" fill="#4ec9b0"/><rect x="48" y="30" width="1" height="1.25" fill="#179fff"/><rect x="49" y="30" width="15" height="1.25" fill="#4ec9b0"/><rect x="64" y="30" width="1" height="1.25" fill="#179fff"/><rect x="65" y="30" width="1" height="1.25" fill="#da70d6"/><rect x="67" y="30" width="2" height="1.25" fill="#569cd6"/><rect x="70" y="30" width="1" height="1.25" fill="#da70d6"/><rect x="4" y="32" width="1" height="1.25" fill="#9cdcfe"/><rect x="5" y="32" width="1" height="1.25" fill="#cccccc"/><rect x="6" y="32" width="14" height="1.25" fill="#dcdcaa"/><rect x="20" y="32" width="1" height="1.25" fill="#179fff"/><rect x="21" y="32" width="1" height="1.25" fill="#179fff"/><rect x="22" y="32" width="1" height="1.25" fill="#cccccc"/><rect x="4" y="36" width="5" height="1.25" fill="#569cd6"/><rect x="10" y="36" width="18" height="1.25" fill="#4fc1ff"/><rect x="29" y="36" width="1" height="1.25" fill="#cccccc"/><rect x="31" y="36" width="16" height="1.25" fill="#dcdcaa"/><rect x="47" y="36" width="1" height="1.25" fill="#179fff"/><rect x="48" y="36" width="8" height="1.25" fill="#4fc1ff"/><rect x="56" y="36" width="1" height="1.25" fill="#cccccc"/><rect x="58" y="36" width="1" height="1.25" fill="#ffd700"/><rect x="60" y="36" width="9" height="1.25" fill="#9cdcfe"/><rect x="69" y="36" width="1" height="1.25" fill="#cccccc"/><rect x="71" y="36" width="1" height="1.25" fill="#b5cea8"/><rect x="72" y="36" width="1" height="1.25" fill="#cccccc"/><rect x="74" y="36" width="9" height="1.25" fill="#9cdcfe"/><rect x="83" y="36" width="1" height="1.25" fill="#cccccc"/><rect x="85" y="36" width="2" height="1.25" fill="#b5cea8"/><rect x="88" y="36" width="1" height="1.25" fill="#ffd700"/><rect x="89" y="36" width="1" height="1.25" fill="#179fff"/><rect x="90" y="36" width="1" height="1.25" fill="#cccccc"/><rect x="4" y="38" width="5" height="1.25" fill="#569cd6"/><rect x="10" y="38" width="15" height="1.25" fill="#4fc1ff"/><rect x="26" y="38" width="1" height="1.25" fill="#cccccc"/><rect x="28" y="38" width="13" height="1.25" fill="#dcdcaa"/><rect x="41" y="38" width="1" height="1.25" fill="#179fff"/><rect x="42" y="38" width="5" height="1.25" fill="#4fc1ff"/><rect x="47" y="38" width="1" height="1.25" fill="#cccccc"/><rect x="49" y="38" width="1" height="1.25" fill="#ffd700"/><rect x="51" y="38" width="9" height="1.25" fill="#9cdcfe"/><rect x="60" y="38" width="1" height="1.25" fill="#cccccc"/><rect x="62" y="38" width="2" height="1.25" fill="#b5cea8"/><rect x="65" y="38" width="1" height="1.25" fill="#ffd700"/><rect x="66" y="38" width="1" height="1.25" fill="#179fff"/><rect x="67" y="38" width="1" height="1.25" fill="#cccccc"/><rect x="4" y="40" width="5" height="1.25" fill="#569cd6"/><rect x="10" y="40" width="18" height="1.25" fill="#4fc1ff"/><rect x="29" y="40" width="1" height="1.25" fill="#cccccc"/><rect x="31" y="40" width="16" height="1.25" fill="#dcdcaa"/><rect x="47" y="40" width="1" height="1.25" fill="#179fff"/><rect x="48" y="40" width="8" height="1.25" fill="#4fc1ff"/><rect x="56" y="40" width="1" height="1.25" fill="#cccccc"/><rect x="58" y="40" width="1" height="1.25" fill="#ffd700"/><rect x="60" y="40" width="9" height="1.25" fill="#9cdcfe"/><rect x="69" y="40" width="1" height="1.25" fill="#cccccc"/><rect x="71" y="40" width="1" height="1.25" fill="#b5cea8"/><rect x="72" y="40" width="1" height="1.25" fill="#cccccc"/><rect x="74" y="40" width="9" height="1.25" fill="#9cdcfe"/><rect x="83" y="40" width="1" height="1.25" fill="#cccccc"/><rect x="85" y="40" width="4" height="1.25" fill="#b5cea8"/><rect x="90" y="40" width="1" height="1.25" fill="#ffd700"/><rect x="91" y="40" width="1" height="1.25" fill="#179fff"/><rect x="92" y="40" width="1" height="1.25" fill="#cccccc"/><rect x="4" y="44" width="2" height="1.25" fill="#c586c0"/><rect x="7" y="44" width="1" height="1.25" fill="#179fff"/><rect x="8" y="44" width="18" height="1.25" fill="#4fc1ff"/><rect x="26" y="44" width="1" height="1.25" fill="#cccccc"/><rect x="27" y="44" width="7" height="1.25" fill="#9cdcfe"/><rect x="35" y="44" width="1" height="1.25" fill="#cccccc"/><rect x="36" y="44" width="1" height="1.25" fill="#cccccc"/><rect x="38" y="44" width="18" height="1.25" fill="#4fc1ff"/><rect x="56" y="44" width="1" height="1.25" fill="#cccccc"/><rect x="57" y="44" width="7" height="1.25" fill="#9cdcfe"/><rect x="65" y="44" width="1" height="1.25" fill="#cccccc"/><rect x="66" y="44" width="1" height="1.25" fill="#cccccc"/><rect x="68" y="44" width="15" height="1.25" fill="#4fc1ff"/><rect x="83" y="44" width="1" height="1.25" fill="#cccccc"/><rect x="84" y="44" width="7" height="1.25" fill="#9cdcfe"/><rect x="91" y="44" width="1" height="1.25" fill="#179fff"/><rect x="93" y="44" width="1" height="1.25" fill="#179fff"/><rect x="6" y="46" width="5" height="1.25" fill="#9cdcfe"/><rect x="11" y="46" width="1" height="1.25" fill="#cccccc"/><rect x="12" y="46" width="7" height="1.25" fill="#dcdcaa"/><rect x="19" y="46" width="1" height="1.25" fill="#ffd700"/><rect x="20" y="46" width="10" height="1.25" fill="#ce9178"/><rect x="31" y="46" width="3" height="1.25" fill="#ce9178"/><rect x="35" y="46" width="8" height="1.25" fill="#ce9178"/><rect x="43" y="46" width="1" height="1.25" fill="#ffd700"/><rect x="44" y="46" width="1" height="1.25" fill="#cccccc"/><rect x="4" y="48" width="1" height="1.25" fill="#179fff"/><rect x="6" y="48" width="4" height="1.25" fill="#c586c0"/><rect x="11" y="48" width="1" height="1.25" fill="#179fff"/><rect x="6" y="50" width="2" height="1.25" fill="#c586c0"/><rect x="9" y="50" width="1" height="1.25" fill="#ffd700"/><rect x="10" y="50" width="18" height="1.25" fill="#4fc1ff"/><rect x="28" y="50" width="1" height="1.25" fill="#cccccc"/><rect x="29" y="50" width="8" height="1.25" fill="#9cdcfe"/><rect x="37" y="50" width="1" height="1.25" fill="#ffd700"/><rect x="39" y="50" width="5" height="1.25" fill="#9cdcfe"/><rect x="44" y="50" width="1" height="1.25" fill="#cccccc"/><rect x="45" y="50" width="5" height="1.25" fill="#dcdcaa"/><rect x="50" y="50" width="1" height="1.25" fill="#ffd700"/><rect x="51" y="50" width="18" height="1.25" fill="#4fc1ff"/><rect x="69" y="50" width="1" height="1.25" fill="#cccccc"/><rect x="70" y="50" width="8" height="1.25" fill="#9cdcfe"/><rect x="78" y="50" width="1" height="1.25" fill="#ffd700"/><rect x="79" y="50" width="1" height="1.25" fill="#cccccc"/><rect x="6" y="52" width="2" height="1.25" fill="#c586c0"/><rect x="9" y="52" width="1" height="1.25" fill="#ffd700"/><rect x="10" y="52" width="18" height="1.25" fill="#4fc1ff"/><rect x="28" y="52" width="1" height="1.25" fill="#cccccc"/><rect x="29" y="52" width="8" height="1.25" fill="#9cdcfe"/><rect x="37" y="52" width="1" height="1.25" fill="#ffd700"/><rect x="39" y="52" width="5" height="1.25" fill="#9cdcfe"/><rect x="44" y="52" width="1" height="1.25" fill="#cccccc"/><rect x="45" y="52" width="5" height="1.25" fill="#dcdcaa"/><rect x="50" y="52" width="1" height="1.25" fill="#ffd700"/><rect x="51" y="52" width="18" height="1.25" fill="#4fc1ff"/><rect x="69" y="52" width="1" height="1.25" fill="#cccccc"/><rect x="70" y="52" width="8" height="1.25" fill="#9cdcfe"/><rect x="78" y="52" width="1" height="1.25" fill="#ffd700"/><rect x="79" y="52" width="1" height="1.25" fill="#cccccc"/><rect x="6" y="54" width="2" height="1.25" fill="#c586c0"/><rect x="9" y="54" width="1" height="1.25" fill="#ffd700"/><rect x="10" y="54" width="15" height="1.25" fill="#4fc1ff"/><rect x="25" y="54" width="1" height="1.25" fill="#cccccc"/><rect x="26" y="54" width="8" height="1.25" fill="#9cdcfe"/><rect x="34" y="54" width="1" height="1.25" fill="#ffd700"/><rect x="36" y="54" width="5" height="1.25" fill="#9cdcfe"/><rect x="41" y="54" width="1" height="1.25" fill="#cccccc"/><rect x="42" y="54" width="5" height="1.25" fill="#dcdcaa"/><rect x="47" y="54" width="1" height="1.25" fill="#ffd700"/><rect x="48" y="54" width="15" height="1.25" fill="#4fc1ff"/><rect x="63" y="54" width="1" height="1.25" fill="#cccccc"/><rect x="64" y="54" width="8" height="1.25" fill="#9cdcfe"/><rect x="72" y="54" width="1" height="1.25" fill="#ffd700"/><rect x="73" y="54" width="1" height="1.25" fill="#cccccc"/><rect x="4" y="56" width="1" height="1.25" fill="#179fff"/><rect x="2" y="58" width="1" height="1.25" fill="#da70d6"/><rect x="3" y="58" width="1" height="1.25" fill="#cccccc"/><rect x="2" y="60" width="6" height="1.25" fill="#c586c0"/><rect x="9" y="60" width="1" height="1.25" fill="#da70d6"/><rect x="4" y="62" width="1" height="1.25" fill="#808080"/><rect x="5" y="62" width="9" height="1.25" fill="#4ec9b0"/><rect x="14" y="62" width="1" height="1.25" fill="#808080"/><rect x="6" y="64" width="1" height="1.25" fill="#808080"/><rect x="7" y="64" width="4" height="1.25" fill="#569cd6"/><rect x="12" y="64" width="8" height="1.25" fill="#9cdcfe"/><rect x="20" y="64" width="1" height="1.25" fill="#cccccc"/><rect x="21" y="64" width="1" height="1.25" fill="#179fff"/><rect x="22" y="64" width="1" height="1.25" fill="#ffd700"/><rect x="23" y="64" width="1" height="1.25" fill="#9cdcfe"/><rect x="24" y="64" width="1" height="1.25" fill="#ffd700"/><rect x="26" y="64" width="2" height="1.25" fill="#569cd6"/><rect x="29" y="64" width="12" height="1.25" fill="#dcdcaa"/><rect x="41" y="64" width="1" height="1.25" fill="#ffd700"/><rect x="42" y="64" width="1" height="1.25" fill="#9cdcfe"/><rect x="43" y="64" width="1" height="1.25" fill="#ffd700"/><rect x="44" y="64" width="1" height="1.25" fill="#179fff"/><rect x="45" y="64" width="1" height="1.25" fill="#808080"/><rect x="8" y="66" width="1" height="1.25" fill="#808080"/><rect x="9" y="66" width="2" height="1.25" fill="#569cd6"/><rect x="11" y="66" width="1" height="1.25" fill="#808080"/><rect x="12" y="66" width="8" height="1.25" fill="#cccccc"/><rect x="20" y="66" width="2" height="1.25" fill="#808080"/><rect x="22" y="66" width="2" height="1.25" fill="#569cd6"/><rect x="24" y="66" width="1" height="1.25" fill="#808080"/><rect x="8" y="68" width="1" height="1.25" fill="#808080"/><rect x="9" y="68" width="5" height="1.25" fill="#569cd6"/><rect x="10" y="70" width="4" height="1.25" fill="#9cdcfe"/><rect x="14" y="70" width="1" height="1.25" fill="#cccccc"/><rect x="15" y="70" width="6" height="1.25" fill="#ce9178"/><rect x="10" y="72" width="11" height="1.25" fill="#9cdcfe"/><rect x="21" y="72" width="1" height="1.25" fill="#cccccc"/><rect x="22" y="72" width="6" height="1.25" fill="#ce9178"/><rect x="10" y="74" width="5" height="1.25" fill="#9cdcfe"/><rect x="15" y="74" width="1" height="1.25" fill="#cccccc"/><rect x="16" y="74" width="1" height="1.25" fill="#179fff"/><rect x="17" y="74" width="8" height="1.25" fill="#4fc1ff"/><rect x="25" y="74" width="1" height="1.25" fill="#179fff"/><rect x="10" y="76" width="8" height="1.25" fill="#9cdcfe"/><rect x="18" y="76" width="1" height="1.25" fill="#cccccc"/><rect x="19" y="76" width="1" height="1.25" fill="#179fff"/><rect x="20" y="76" width="1" height="1.25" fill="#ffd700"/><rect x="21" y="76" width="1" height="1.25" fill="#9cdcfe"/><rect x="22" y="76" width="1" height="1.25" fill="#ffd700"/><rect x="24" y="76" width="2" height="1.25" fill="#569cd6"/><rect x="27" y="76" width="11" height="1.25" fill="#dcdcaa"/><rect x="38" y="76" width="1" height="1.25" fill="#ffd700"/><rect x="39" y="76" width="1" height="1.25" fill="#9cdcfe"/><rect x="40" y="76" width="1" height="1.25" fill="#cccccc"/><rect x="41" y="76" width="6" height="1.25" fill="#9cdcfe"/><rect x="47" y="76" width="1" height="1.25" fill="#cccccc"/><rect x="48" y="76" width="5" height="1.25" fill="#9cdcfe"/><rect x="53" y="76" width="1" height="1.25" fill="#ffd700"/><rect x="54" y="76" width="1" height="1.25" fill="#179fff"/><rect x="10" y="78" width="8" height="1.25" fill="#9cdcfe"/><rect x="8" y="80" width="2" height="1.25" fill="#808080"/><rect x="8" y="82" width="1" height="1.25" fill="#808080"/><rect x="9" y="82" width="5" height="1.25" fill="#569cd6"/><rect x="10" y="84" width="4" height="1.25" fill="#9cdcfe"/><rect x="14" y="84" width="1" height="1.25" fill="#cccccc"/><rect x="15" y="84" width="7" height="1.25" fill="#ce9178"/><rect x="10" y="86" width="11" height="1.25" fill="#9cdcfe"/><rect x="21" y="86" width="1" height="1.25" fill="#cccccc"/><rect x="22" y="86" width="8" height="1.25" fill="#ce9178"/><rect x="10" y="88" width="5" height="1.25" fill="#9cdcfe"/><rect x="15" y="88" width="1" height="1.25" fill="#cccccc"/><rect x="16" y="88" width="1" height="1.25" fill="#179fff"/><rect x="17" y="88" width="5" height="1.25" fill="#4fc1ff"/><rect x="22" y="88" width="1" height="1.25" fill="#179fff"/><rect x="10" y="90" width="8" height="1.25" fill="#9cdcfe"/><rect x="18" y="90" width="1" height="1.25" fill="#cccccc"/><rect x="19" y="90" width="1" height="1.25" fill="#179fff"/><rect x="20" y="90" width="1" height="1.25" fill="#ffd700"/><rect x="21" y="90" width="1" height="1.25" fill="#9cdcfe"/><rect x="22" y="90" width="1" height="1.25" fill="#ffd700"/><rect x="24" y="90" width="2" height="1.25" fill="#569cd6"/><rect x="27" y="90" width="8" height="1.25" fill="#dcdcaa"/><rect x="35" y="90" width="1" height="1.25" fill="#ffd700"/><rect x="36" y="90" width="1" height="1.25" fill="#9cdcfe"/><rect x="37" y="90" width="1" height="1.25" fill="#cccccc"/><rect x="38" y="90" width="6" height="1.25" fill="#9cdcfe"/><rect x="44" y="90" width="1" height="1.25" fill="#cccccc"/><rect x="45" y="90" width="5" height="1.25" fill="#9cdcfe"/><rect x="50" y="90" width="1" height="1.25" fill="#ffd700"/><rect x="51" y="90" width="1" height="1.25" fill="#179fff"/><rect x="10" y="92" width="8" height="1.25" fill="#9cdcfe"/><rect x="8" y="94" width="2" height="1.25" fill="#808080"/><rect x="8" y="96" width="1" height="1.25" fill="#808080"/><rect x="9" y="96" width="5" height="1.25" fill="#569cd6"/><rect x="10" y="98" width="4" height="1.25" fill="#9cdcfe"/><rect x="14" y="98" width="1" height="1.25" fill="#cccccc"/><rect x="15" y="98" width="10" height="1.25" fill="#ce9178"/><rect x="10" y="100" width="11" height="1.25" fill="#9cdcfe"/><rect x="21" y="100" width="1" height="1.25" fill="#cccccc"/><rect x="22" y="100" width="7" height="1.25" fill="#ce9178"/><rect x="10" y="102" width="5" height="1.25" fill="#9cdcfe"/><rect x="15" y="102" width="1" height="1.25" fill="#cccccc"/><rect x="16" y="102" width="1" height="1.25" fill="#179fff"/><rect x="17" y="102" width="8" height="1.25" fill="#4fc1ff"/><rect x="25" y="102" width="1" height="1.25" fill="#179fff"/><rect x="10" y="104" width="8" height="1.25" fill="#9cdcfe"/><rect x="18" y="104" width="1" height="1.25" fill="#cccccc"/><rect x="19" y="104" width="1" height="1.25" fill="#179fff"/><rect x="20" y="104" width="1" height="1.25" fill="#ffd700"/><rect x="21" y="104" width="1" height="1.25" fill="#9cdcfe"/><rect x="22" y="104" width="1" height="1.25" fill="#ffd700"/><rect x="24" y="104" width="2" height="1.25" fill="#569cd6"/><rect x="27" y="104" width="11" height="1.25" fill="#dcdcaa"/><rect x="38" y="104" width="1" height="1.25" fill="#ffd700"/><rect x="39" y="104" width="1" height="1.25" fill="#9cdcfe"/><rect x="40" y="104" width="1" height="1.25" fill="#cccccc"/><rect x="41" y="104" width="6" height="1.25" fill="#9cdcfe"/><rect x="47" y="104" width="1" height="1.25" fill="#cccccc"/><rect x="48" y="104" width="5" height="1.25" fill="#9cdcfe"/><rect x="53" y="104" width="1" height="1.25" fill="#ffd700"/><rect x="54" y="104" width="1" height="1.25" fill="#179fff"/><rect x="10" y="106" width="8" height="1.25" fill="#9cdcfe"/><rect x="8" y="108" width="2" height="1.25" fill="#808080"/><rect x="8" y="110" width="1" height="1.25" fill="#808080"/><rect x="9" y="110" width="6" height="1.25" fill="#569cd6"/><rect x="16" y="110" width="4" height="1.25" fill="#9cdcfe"/><rect x="20" y="110" width="1" height="1.25" fill="#cccccc"/><rect x="21" y="110" width="8" height="1.25" fill="#ce9178"/><rect x="29" y="110" width="1" height="1.25" fill="#808080"/><rect x="30" y="110" width="9" height="1.25" fill="#cccccc"/><rect x="39" y="110" width="2" height="1.25" fill="#808080"/><rect x="41" y="110" width="6" height="1.25" fill="#569cd6"/><rect x="47" y="110" width="1" height="1.25" fill="#808080"/><rect x="8" y="112" width="1" height="1.25" fill="#808080"/><rect x="9" y="112" width="4" height="1.25" fill="#4ec9b0"/><rect x="14" y="112" width="2" height="1.25" fill="#9cdcfe"/><rect x="16" y="112" width="1" height="1.25" fill="#cccccc"/><rect x="17" y="112" width="3" height="1.25" fill="#ce9178"/><rect x="20" y="112" width="1" height="1.25" fill="#808080"/><rect x="21" y="112" width="2" height="1.25" fill="#cccccc"/><rect x="24" y="112" width="6" height="1.25" fill="#cccccc"/><rect x="31" y="112" width="3" height="1.25" fill="#cccccc"/><rect x="35" y="112" width="6" height="1.25" fill="#cccccc"/><rect x="42" y="112" width="4" height="1.25" fill="#cccccc"/><rect x="47" y="112" width="5" height="1.25" fill="#cccccc"/><rect x="52" y="112" width="2" height="1.25" fill="#808080"/><rect x="54" y="112" width="4" height="1.25" fill="#4ec9b0"/><rect x="58" y="112" width="1" height="1.25" fill="#808080"/><rect x="6" y="114" width="2" height="1.25" fill="#808080"/><rect x="8" y="114" width="4" height="1.25" fill="#569cd6"/><rect x="12" y="114" width="1" height="1.25" fill="#808080"/><rect x="4" y="116" width="2" height="1.25" fill="#808080"/><rect x="6" y="116" width="9" height="1.25" fill="#4ec9b0"/><rect x="15" y="116" width="1" height="1.25" fill="#808080"/><rect x="2" y="118" width="1" height="1.25" fill="#da70d6"/><rect x="3" y="118" width="1" height="1.25" fill="#cccccc"/><rect x="0" y="120" width="1" height="1.25" fill="#ffd700"/><rect x="1" y="120" width="1" height="1.25" fill="#cccccc"/><rect x="0" y="124" width="6" height="1.25" fill="#c586c0"/><rect x="7" y="124" width="7" height="1.25" fill="#c586c0"/><rect x="15" y="124" width="8" height="1.25" fill="#dcdcaa"/><rect x="23" y="124" width="1" height="1.25" fill="#cccccc"/></g></svg>
<svg class="mm" style="left:1757px;top:47.5px" width="120" height="108" viewBox="0 0 120 108"><defs><pattern id="pmm1757" width="1" height="2" patternUnits="userSpaceOnUse"><rect x="0" y="0" width="0.8" height="1.6" fill="#fff"/></pattern><mask id="kmm1757"><rect width="120" height="108" fill="url(#pmm1757)"/></mask></defs><g mask="url(#kmm1757)"><rect x="0" y="0" width="6" height="1.25" fill="#c586c0"/><rect x="7" y="0" width="5" height="1.25" fill="#9cdcfe"/><rect x="12" y="0" width="1" height="1.25" fill="#cccccc"/><rect x="14" y="0" width="1" height="1.25" fill="#ffd700"/><rect x="16" y="0" width="8" height="1.25" fill="#9cdcfe"/><rect x="25" y="0" width="1" height="1.25" fill="#ffd700"/><rect x="27" y="0" width="4" height="1.25" fill="#c586c0"/><rect x="32" y="0" width="7" height="1.25" fill="#ce9178"/><rect x="39" y="0" width="1" height="1.25" fill="#cccccc"/><rect x="0" y="4" width="6" height="1.25" fill="#c586c0"/><rect x="7" y="4" width="1" height="1.25" fill="#ffd700"/><rect x="9" y="4" width="16" height="1.25" fill="#9cdcfe"/><rect x="25" y="4" width="1" height="1.25" fill="#cccccc"/><rect x="27" y="4" width="16" height="1.25" fill="#9cdcfe"/><rect x="44" y="4" width="1" height="1.25" fill="#ffd700"/><rect x="46" y="4" width="4" height="1.25" fill="#c586c0"/><rect x="51" y="4" width="21" height="1.25" fill="#ce9178"/><rect x="72" y="4" width="1" height="1.25" fill="#cccccc"/><rect x="0" y="8" width="6" height="1.25" fill="#c586c0"/><rect x="7" y="8" width="1" height="1.25" fill="#ffd700"/><rect x="9" y="8" width="4" height="1.25" fill="#9cdcfe"/><rect x="14" y="8" width="1" height="1.25" fill="#ffd700"/><rect x="16" y="8" width="4" height="1.25" fill="#c586c0"/><rect x="21" y="8" width="18" height="1.25" fill="#ce9178"/><rect x="39" y="8" width="1" height="1.25" fill="#cccccc"/><rect x="0" y="12" width="6" height="1.25" fill="#c586c0"/><rect x="7" y="12" width="9" height="1.25" fill="#9cdcfe"/><rect x="17" y="12" width="4" height="1.25" fill="#c586c0"/><rect x="22" y="12" width="11" height="1.25" fill="#ce9178"/><rect x="33" y="12" width="1" height="1.25" fill="#cccccc"/><rect x="0" y="16" width="6" height="1.25" fill="#c586c0"/><rect x="7" y="16" width="1" height="1.25" fill="#ffd700"/><rect x="9" y="16" width="5" height="1.25" fill="#9cdcfe"/><rect x="15" y="16" width="1" height="1.25" fill="#ffd700"/><rect x="17" y="16" width="4" height="1.25" fill="#c586c0"/><rect x="22" y="16" width="16" height="1.25" fill="#ce9178"/><rect x="38" y="16" width="1" height="1.25" fill="#cccccc"/><rect x="0" y="20" width="5" height="1.25" fill="#569cd6"/><rect x="6" y="20" width="5" height="1.25" fill="#dcdcaa"/><rect x="12" y="20" width="1" height="1.25" fill="#cccccc"/><rect x="14" y="20" width="1" height="1.25" fill="#ffd700"/><rect x="15" y="20" width="1" height="1.25" fill="#ffd700"/><rect x="17" y="20" width="2" height="1.25" fill="#569cd6"/><rect x="20" y="20" width="1" height="1.25" fill="#ffd700"/><rect x="2" y="22" width="5" height="1.25" fill="#569cd6"/><rect x="8" y="22" width="1" height="1.25" fill="#da70d6"/><rect x="9" y="22" width="8" height="1.25" fill="#4fc1ff"/><rect x="17" y="22" width="1" height="1.25" fill="#cccccc"/><rect x="19" y="22" width="11" height="1.25" fill="#dcdcaa"/><rect x="30" y="22" width="1" height="1.25" fill="#da70d6"/><rect x="32" y="22" width="1" height="1.25" fill="#cccccc"/><rect x="34" y="22" width="8" height="1.25" fill="#dcdcaa"/><rect x="42" y="22" width="1" height="1.25" fill="#da70d6"/><rect x="43" y="22" width="2" height="1.25" fill="#ce9178"/><rect x="45" y="22" width="1" height="1.25" fill="#da70d6"/><rect x="46" y="22" width="1" height="1.25" fill="#cccccc"/><rect x="2" y="24" width="5" height="1.25" fill="#569cd6"/><rect x="8" y="24" width="1" height="1.25" fill="#da70d6"/><rect x="9" y="24" width="8" height="1.25" fill="#4fc1ff"/><rect x="17" y="24" width="1" height="1.25" fill="#cccccc"/><rect x="19" y="24" width="11" height="1.25" fill="#dcdcaa"/><rect x="30" y="24" width="1" height="1.25" fill="#da70d6"/><rect x="32" y="24" width="1" height="1.25" fill="#cccccc"/><rect x="34" y="24" width="8" height="1.25" fill="#dcdcaa"/><rect x="42" y="24" width="1" height="1.25" fill="#da70d6"/><rect x="43" y="24" width="2" height="1.25" fill="#ce9178"/><rect x="45" y="24" width="1" height="1.25" fill="#da70d6"/><rect x="46" y="24" width="1" height="1.25" fill="#cccccc"/><rect x="2" y="28" width="5" height="1.25" fill="#569cd6"/><rect x="8" y="28" width="12" height="1.25" fill="#dcdcaa"/><rect x="21" y="28" width="1" height="1.25" fill="#cccccc"/><rect x="23" y="28" width="5" height="1.25" fill="#569cd6"/><rect x="29" y="28" width="1" height="1.25" fill="#da70d6"/><rect x="30" y="28" width="1" height="1.25" fill="#9cdcfe"/><rect x="31" y="28" width="1" height="1.25" fill="#cccccc"/><rect x="33" y="28" width="5" height="1.25" fill="#4ec9b0"/><rect x="38" y="28" width="1" height="1.25" fill="#cccccc"/><rect x="39" y="28" width="9" height="1.25" fill="#4ec9b0"/><rect x="48" y="28" width="1" height="1.25" fill="#179fff"/><rect x="49" y="28" width="15" height="1.25" fill="#4ec9b0"/><rect x="64" y="28" width="1" height="1.25" fill="#179fff"/><rect x="65" y="28" width="1" height="1.25" fill="#da70d6"/><rect x="67" y="28" width="2" height="1.25" fill="#569cd6"/><rect x="70" y="28" width="1" height="1.25" fill="#da70d6"/><rect x="4" y="30" width="1" height="1.25" fill="#9cdcfe"/><rect x="5" y="30" width="1" height="1.25" fill="#cccccc"/><rect x="6" y="30" width="14" height="1.25" fill="#dcdcaa"/><rect x="20" y="30" width="1" height="1.25" fill="#179fff"/><rect x="21" y="30" width="1" height="1.25" fill="#179fff"/><rect x="22" y="30" width="1" height="1.25" fill="#cccccc"/><rect x="4" y="34" width="5" height="1.25" fill="#569cd6"/><rect x="10" y="34" width="18" height="1.25" fill="#4fc1ff"/><rect x="29" y="34" width="1" height="1.25" fill="#cccccc"/><rect x="31" y="34" width="16" height="1.25" fill="#dcdcaa"/><rect x="47" y="34" width="1" height="1.25" fill="#179fff"/><rect x="48" y="34" width="8" height="1.25" fill="#4fc1ff"/><rect x="56" y="34" width="1" height="1.25" fill="#cccccc"/><rect x="58" y="34" width="1" height="1.25" fill="#ffd700"/><rect x="60" y="34" width="9" height="1.25" fill="#9cdcfe"/><rect x="69" y="34" width="1" height="1.25" fill="#cccccc"/><rect x="71" y="34" width="1" height="1.25" fill="#b5cea8"/><rect x="72" y="34" width="1" height="1.25" fill="#cccccc"/><rect x="74" y="34" width="9" height="1.25" fill="#9cdcfe"/><rect x="83" y="34" width="1" height="1.25" fill="#cccccc"/><rect x="85" y="34" width="2" height="1.25" fill="#b5cea8"/><rect x="88" y="34" width="1" height="1.25" fill="#ffd700"/><rect x="89" y="34" width="1" height="1.25" fill="#179fff"/><rect x="90" y="34" width="1" height="1.25" fill="#cccccc"/><rect x="4" y="36" width="5" height="1.25" fill="#569cd6"/><rect x="10" y="36" width="18" height="1.25" fill="#4fc1ff"/><rect x="29" y="36" width="1" height="1.25" fill="#cccccc"/><rect x="31" y="36" width="16" height="1.25" fill="#dcdcaa"/><rect x="47" y="36" width="1" height="1.25" fill="#179fff"/><rect x="48" y="36" width="8" height="1.25" fill="#4fc1ff"/><rect x="56" y="36" width="1" height="1.25" fill="#cccccc"/><rect x="58" y="36" width="1" height="1.25" fill="#ffd700"/><rect x="60" y="36" width="9" height="1.25" fill="#9cdcfe"/><rect x="69" y="36" width="1" height="1.25" fill="#cccccc"/><rect x="71" y="36" width="1" height="1.25" fill="#b5cea8"/><rect x="72" y="36" width="1" height="1.25" fill="#cccccc"/><rect x="74" y="36" width="9" height="1.25" fill="#9cdcfe"/><rect x="83" y="36" width="1" height="1.25" fill="#cccccc"/><rect x="85" y="36" width="4" height="1.25" fill="#b5cea8"/><rect x="90" y="36" width="1" height="1.25" fill="#ffd700"/><rect x="91" y="36" width="1" height="1.25" fill="#179fff"/><rect x="92" y="36" width="1" height="1.25" fill="#cccccc"/><rect x="4" y="40" width="2" height="1.25" fill="#c586c0"/><rect x="7" y="40" width="1" height="1.25" fill="#179fff"/><rect x="8" y="40" width="18" height="1.25" fill="#4fc1ff"/><rect x="26" y="40" width="1" height="1.25" fill="#cccccc"/><rect x="27" y="40" width="7" height="1.25" fill="#9cdcfe"/><rect x="35" y="40" width="1" height="1.25" fill="#cccccc"/><rect x="36" y="40" width="1" height="1.25" fill="#cccccc"/><rect x="38" y="40" width="18" height="1.25" fill="#4fc1ff"/><rect x="56" y="40" width="1" height="1.25" fill="#cccccc"/><rect x="57" y="40" width="7" height="1.25" fill="#9cdcfe"/><rect x="64" y="40" width="1" height="1.25" fill="#179fff"/><rect x="66" y="40" width="1" height="1.25" fill="#179fff"/><rect x="6" y="42" width="5" height="1.25" fill="#9cdcfe"/><rect x="11" y="42" width="1" height="1.25" fill="#cccccc"/><rect x="12" y="42" width="7" height="1.25" fill="#dcdcaa"/><rect x="19" y="42" width="1" height="1.25" fill="#ffd700"/><rect x="20" y="42" width="6" height="1.25" fill="#ce9178"/><rect x="27" y="42" width="3" height="1.25" fill="#ce9178"/><rect x="31" y="42" width="8" height="1.25" fill="#ce9178"/><rect x="39" y="42" width="1" height="1.25" fill="#ffd700"/><rect x="40" y="42" width="1" height="1.25" fill="#cccccc"/><rect x="4" y="44" width="1" height="1.25" fill="#179fff"/><rect x="6" y="44" width="4" height="1.25" fill="#c586c0"/><rect x="11" y="44" width="1" height="1.25" fill="#179fff"/><rect x="6" y="46" width="2" height="1.25" fill="#c586c0"/><rect x="9" y="46" width="1" height="1.25" fill="#ffd700"/><rect x="10" y="46" width="18" height="1.25" fill="#4fc1ff"/><rect x="28" y="46" width="1" height="1.25" fill="#cccccc"/><rect x="29" y="46" width="8" height="1.25" fill="#9cdcfe"/><rect x="37" y="46" width="1" height="1.25" fill="#ffd700"/><rect x="39" y="46" width="5" height="1.25" fill="#9cdcfe"/><rect x="44" y="46" width="1" height="1.25" fill="#cccccc"/><rect x="45" y="46" width="5" height="1.25" fill="#dcdcaa"/><rect x="50" y="46" width="1" height="1.25" fill="#ffd700"/><rect x="51" y="46" width="18" height="1.25" fill="#4fc1ff"/><rect x="69" y="46" width="1" height="1.25" fill="#cccccc"/><rect x="70" y="46" width="8" height="1.25" fill="#9cdcfe"/><rect x="78" y="46" width="1" height="1.25" fill="#ffd700"/><rect x="79" y="46" width="1" height="1.25" fill="#cccccc"/><rect x="6" y="48" width="2" height="1.25" fill="#c586c0"/><rect x="9" y="48" width="1" height="1.25" fill="#ffd700"/><rect x="10" y="48" width="18" height="1.25" fill="#4fc1ff"/><rect x="28" y="48" width="1" height="1.25" fill="#cccccc"/><rect x="29" y="48" width="8" height="1.25" fill="#9cdcfe"/><rect x="37" y="48" width="1" height="1.25" fill="#ffd700"/><rect x="39" y="48" width="5" height="1.25" fill="#9cdcfe"/><rect x="44" y="48" width="1" height="1.25" fill="#cccccc"/><rect x="45" y="48" width="5" height="1.25" fill="#dcdcaa"/><rect x="50" y="48" width="1" height="1.25" fill="#ffd700"/><rect x="51" y="48" width="18" height="1.25" fill="#4fc1ff"/><rect x="69" y="48" width="1" height="1.25" fill="#cccccc"/><rect x="70" y="48" width="8" height="1.25" fill="#9cdcfe"/><rect x="78" y="48" width="1" height="1.25" fill="#ffd700"/><rect x="79" y="48" width="1" height="1.25" fill="#cccccc"/><rect x="4" y="50" width="1" height="1.25" fill="#179fff"/><rect x="2" y="52" width="1" height="1.25" fill="#da70d6"/><rect x="3" y="52" width="1" height="1.25" fill="#cccccc"/><rect x="2" y="56" width="6" height="1.25" fill="#c586c0"/><rect x="9" y="56" width="1" height="1.25" fill="#da70d6"/><rect x="4" y="58" width="1" height="1.25" fill="#808080"/><rect x="5" y="58" width="9" height="1.25" fill="#4ec9b0"/><rect x="14" y="58" width="1" height="1.25" fill="#808080"/><rect x="6" y="60" width="1" height="1.25" fill="#808080"/><rect x="7" y="60" width="4" height="1.25" fill="#569cd6"/><rect x="12" y="60" width="8" height="1.25" fill="#9cdcfe"/><rect x="20" y="60" width="1" height="1.25" fill="#cccccc"/><rect x="21" y="60" width="1" height="1.25" fill="#179fff"/><rect x="22" y="60" width="1" height="1.25" fill="#ffd700"/><rect x="23" y="60" width="1" height="1.25" fill="#9cdcfe"/><rect x="24" y="60" width="1" height="1.25" fill="#ffd700"/><rect x="26" y="60" width="2" height="1.25" fill="#569cd6"/><rect x="29" y="60" width="12" height="1.25" fill="#dcdcaa"/><rect x="41" y="60" width="1" height="1.25" fill="#ffd700"/><rect x="42" y="60" width="1" height="1.25" fill="#9cdcfe"/><rect x="43" y="60" width="1" height="1.25" fill="#ffd700"/><rect x="44" y="60" width="1" height="1.25" fill="#179fff"/><rect x="45" y="60" width="1" height="1.25" fill="#808080"/><rect x="8" y="62" width="1" height="1.25" fill="#808080"/><rect x="9" y="62" width="2" height="1.25" fill="#569cd6"/><rect x="11" y="62" width="1" height="1.25" fill="#808080"/><rect x="12" y="62" width="5" height="1.25" fill="#cccccc"/><rect x="17" y="62" width="2" height="1.25" fill="#808080"/><rect x="19" y="62" width="2" height="1.25" fill="#569cd6"/><rect x="21" y="62" width="1" height="1.25" fill="#808080"/><rect x="8" y="64" width="1" height="1.25" fill="#808080"/><rect x="9" y="64" width="5" height="1.25" fill="#569cd6"/><rect x="10" y="66" width="4" height="1.25" fill="#9cdcfe"/><rect x="14" y="66" width="1" height="1.25" fill="#cccccc"/><rect x="15" y="66" width="6" height="1.25" fill="#ce9178"/><rect x="10" y="68" width="11" height="1.25" fill="#9cdcfe"/><rect x="21" y="68" width="1" height="1.25" fill="#cccccc"/><rect x="22" y="68" width="5" height="1.25" fill="#ce9178"/><rect x="28" y="68" width="2" height="1.25" fill="#ce9178"/><rect x="31" y="68" width="8" height="1.25" fill="#ce9178"/><rect x="10" y="70" width="5" height="1.25" fill="#9cdcfe"/><rect x="15" y="70" width="1" height="1.25" fill="#cccccc"/><rect x="16" y="70" width="1" height="1.25" fill="#179fff"/><rect x="17" y="70" width="8" height="1.25" fill="#4fc1ff"/><rect x="25" y="70" width="1" height="1.25" fill="#179fff"/><rect x="10" y="72" width="8" height="1.25" fill="#9cdcfe"/><rect x="18" y="72" width="1" height="1.25" fill="#cccccc"/><rect x="19" y="72" width="1" height="1.25" fill="#179fff"/><rect x="20" y="72" width="1" height="1.25" fill="#ffd700"/><rect x="21" y="72" width="1" height="1.25" fill="#9cdcfe"/><rect x="22" y="72" width="1" height="1.25" fill="#ffd700"/><rect x="24" y="72" width="2" height="1.25" fill="#569cd6"/><rect x="27" y="72" width="11" height="1.25" fill="#dcdcaa"/><rect x="38" y="72" width="1" height="1.25" fill="#ffd700"/><rect x="39" y="72" width="1" height="1.25" fill="#9cdcfe"/><rect x="40" y="72" width="1" height="1.25" fill="#cccccc"/><rect x="41" y="72" width="6" height="1.25" fill="#9cdcfe"/><rect x="47" y="72" width="1" height="1.25" fill="#cccccc"/><rect x="48" y="72" width="5" height="1.25" fill="#9cdcfe"/><rect x="53" y="72" width="1" height="1.25" fill="#ffd700"/><rect x="54" y="72" width="1" height="1.25" fill="#179fff"/><rect x="10" y="74" width="8" height="1.25" fill="#9cdcfe"/><rect x="8" y="76" width="2" height="1.25" fill="#808080"/><rect x="8" y="78" width="1" height="1.25" fill="#808080"/><rect x="9" y="78" width="5" height="1.25" fill="#569cd6"/><rect x="10" y="80" width="4" height="1.25" fill="#9cdcfe"/><rect x="14" y="80" width="1" height="1.25" fill="#cccccc"/><rect x="15" y="80" width="10" height="1.25" fill="#ce9178"/><rect x="10" y="82" width="11" height="1.25" fill="#9cdcfe"/><rect x="21" y="82" width="1" height="1.25" fill="#cccccc"/><rect x="22" y="82" width="7" height="1.25" fill="#ce9178"/><rect x="10" y="84" width="5" height="1.25" fill="#9cdcfe"/><rect x="15" y="84" width="1" height="1.25" fill="#cccccc"/><rect x="16" y="84" width="1" height="1.25" fill="#179fff"/><rect x="17" y="84" width="8" height="1.25" fill="#4fc1ff"/><rect x="25" y="84" width="1" height="1.25" fill="#179fff"/><rect x="10" y="86" width="8" height="1.25" fill="#9cdcfe"/><rect x="18" y="86" width="1" height="1.25" fill="#cccccc"/><rect x="19" y="86" width="1" height="1.25" fill="#179fff"/><rect x="20" y="86" width="1" height="1.25" fill="#ffd700"/><rect x="21" y="86" width="1" height="1.25" fill="#9cdcfe"/><rect x="22" y="86" width="1" height="1.25" fill="#ffd700"/><rect x="24" y="86" width="2" height="1.25" fill="#569cd6"/><rect x="27" y="86" width="11" height="1.25" fill="#dcdcaa"/><rect x="38" y="86" width="1" height="1.25" fill="#ffd700"/><rect x="39" y="86" width="1" height="1.25" fill="#9cdcfe"/><rect x="40" y="86" width="1" height="1.25" fill="#cccccc"/><rect x="41" y="86" width="6" height="1.25" fill="#9cdcfe"/><rect x="47" y="86" width="1" height="1.25" fill="#cccccc"/><rect x="48" y="86" width="5" height="1.25" fill="#9cdcfe"/><rect x="53" y="86" width="1" height="1.25" fill="#ffd700"/><rect x="54" y="86" width="1" height="1.25" fill="#179fff"/><rect x="10" y="88" width="8" height="1.25" fill="#9cdcfe"/><rect x="8" y="90" width="2" height="1.25" fill="#808080"/><rect x="8" y="92" width="1" height="1.25" fill="#808080"/><rect x="9" y="92" width="6" height="1.25" fill="#569cd6"/><rect x="16" y="92" width="4" height="1.25" fill="#9cdcfe"/><rect x="20" y="92" width="1" height="1.25" fill="#cccccc"/><rect x="21" y="92" width="8" height="1.25" fill="#ce9178"/><rect x="29" y="92" width="1" height="1.25" fill="#808080"/><rect x="30" y="92" width="6" height="1.25" fill="#cccccc"/><rect x="36" y="92" width="2" height="1.25" fill="#808080"/><rect x="38" y="92" width="6" height="1.25" fill="#569cd6"/><rect x="44" y="92" width="1" height="1.25" fill="#808080"/><rect x="8" y="94" width="1" height="1.25" fill="#808080"/><rect x="9" y="94" width="4" height="1.25" fill="#4ec9b0"/><rect x="14" y="94" width="2" height="1.25" fill="#9cdcfe"/><rect x="16" y="94" width="1" height="1.25" fill="#cccccc"/><rect x="17" y="94" width="11" height="1.25" fill="#ce9178"/><rect x="28" y="94" width="1" height="1.25" fill="#808080"/><rect x="29" y="94" width="3" height="1.25" fill="#cccccc"/><rect x="33" y="94" width="6" height="1.25" fill="#cccccc"/><rect x="40" y="94" width="3" height="1.25" fill="#cccccc"/><rect x="44" y="94" width="6" height="1.25" fill="#cccccc"/><rect x="51" y="94" width="11" height="1.25" fill="#cccccc"/><rect x="62" y="94" width="2" height="1.25" fill="#808080"/><rect x="64" y="94" width="4" height="1.25" fill="#4ec9b0"/><rect x="68" y="94" width="1" height="1.25" fill="#808080"/><rect x="6" y="96" width="2" height="1.25" fill="#808080"/><rect x="8" y="96" width="4" height="1.25" fill="#569cd6"/><rect x="12" y="96" width="1" height="1.25" fill="#808080"/><rect x="4" y="98" width="2" height="1.25" fill="#808080"/><rect x="6" y="98" width="9" height="1.25" fill="#4ec9b0"/><rect x="15" y="98" width="1" height="1.25" fill="#808080"/><rect x="2" y="100" width="1" height="1.25" fill="#da70d6"/><rect x="3" y="100" width="1" height="1.25" fill="#cccccc"/><rect x="0" y="102" width="1" height="1.25" fill="#ffd700"/><rect x="1" y="102" width="1" height="1.25" fill="#cccccc"/><rect x="0" y="106" width="6" height="1.25" fill="#c586c0"/><rect x="7" y="106" width="7" height="1.25" fill="#c586c0"/><rect x="15" y="106" width="5" height="1.25" fill="#dcdcaa"/><rect x="20" y="106" width="1" height="1.25" fill="#cccccc"/></g></svg>
<div class="abs" style="left:929px;top:47.5px;width:1px;height:712.5px;background:#010409"></div>
<div class="abs" style="left:929px;top:48px;width:12px;height:455px;background:#434343"></div>
<div class="abs" style="left:930px;top:323.5px;width:11px;height:1.5px;background:#8f8f8f"></div>
<div class="abs" style="left:1869px;top:47.5px;width:1px;height:712.5px;background:#010409"></div>
<div class="abs" style="left:1870px;top:428.8px;width:5px;height:1.4px;background:#8f8f8f"></div>
<div class="abs" style="left:45px;top:99px;width:595px;height:39px;border:4px solid #ff0000"></div>
<div class="abs" style="left:59px;top:321.8px;width:632.7px;height:185.8px;border:1.5px solid #ff0000"></div>
<div class="abs" style="left:984px;top:69.2px;width:517px;height:36.6px;border:4px solid #ff0000"></div>
<div class="abs" style="left:1006px;top:310.3px;width:611.5px;height:152.2px;border:1.5px solid #ff0000"></div>
</body></html>
